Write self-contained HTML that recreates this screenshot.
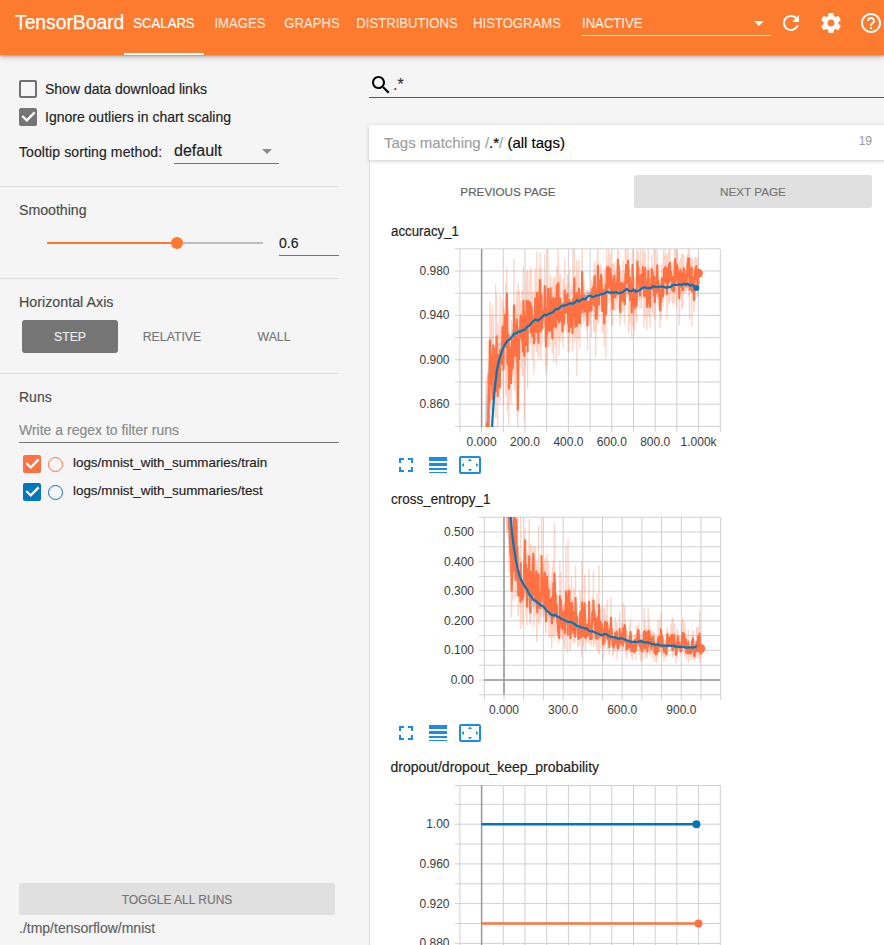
<!DOCTYPE html>
<html><head><meta charset="utf-8"><style>
html,body{margin:0;padding:0;width:884px;height:945px;overflow:hidden;background:#f5f5f5;}
body{position:relative;font-family:"Liberation Sans",sans-serif;}
.t{position:absolute;white-space:nowrap;line-height:1;-webkit-text-stroke:0.15px currentColor;}
.r{position:absolute;}
</style></head><body>
<div class="r" style="left:0px;top:0px;width:884px;height:945px;background:#f5f5f5;"></div>
<div class="r" style="left:369px;top:160px;width:531px;height:800px;background:#fff;border-left:1px solid #dedede;box-sizing:border-box;"></div>
<div class="r" style="left:369px;top:125px;width:531px;height:35px;background:#fff;box-shadow:0 1px 4px rgba(0,0,0,0.22);"></div>
<div class="r" style="left:0px;top:0px;width:884px;height:55px;background:#fd7b2e;box-shadow:0 1px 2px rgba(0,0,0,0.25), 0 2px 6px rgba(0,0,0,0.22);z-index:5;"></div>
<div style="position:absolute;left:0;top:0;width:884px;height:55px;z-index:6"><div class="t" style="left:15px;top:12.15px;font-size:20.5px;color:#fff;-webkit-text-stroke:0.25px #fff;transform:scaleX(0.94);transform-origin:0 0;">TensorBoard</div><div class="t" style="left:-36px;width:400px;text-align:center;top:15.58px;font-size:14.2px;color:#fff;-webkit-text-stroke:0.2px currentColor;transform:scaleX(0.925);transform-origin:50% 0;">SCALARS</div><div class="t" style="left:39.5px;width:400px;text-align:center;top:15.58px;font-size:14.2px;color:rgba(255,255,255,0.78);-webkit-text-stroke:0.2px currentColor;transform:scaleX(0.925);transform-origin:50% 0;">IMAGES</div><div class="t" style="left:112px;width:400px;text-align:center;top:15.58px;font-size:14.2px;color:rgba(255,255,255,0.78);-webkit-text-stroke:0.2px currentColor;transform:scaleX(0.925);transform-origin:50% 0;">GRAPHS</div><div class="t" style="left:206.5px;width:400px;text-align:center;top:15.58px;font-size:14.2px;color:rgba(255,255,255,0.78);-webkit-text-stroke:0.2px currentColor;transform:scaleX(0.925);transform-origin:50% 0;">DISTRIBUTIONS</div><div class="t" style="left:317px;width:400px;text-align:center;top:15.58px;font-size:14.2px;color:rgba(255,255,255,0.78);-webkit-text-stroke:0.2px currentColor;transform:scaleX(0.925);transform-origin:50% 0;">HISTOGRAMS</div><div class="r" style="left:124px;top:53px;width:80px;height:2px;background:#fff;"></div><div class="t" style="left:582px;top:15.58px;font-size:14.2px;color:rgba(255,255,255,0.85);-webkit-text-stroke:0.2px currentColor;transform:scaleX(0.925);transform-origin:0 0;">INACTIVE</div><div class="r" style="left:582px;top:35px;width:189px;height:1px;background:rgba(255,255,255,0.85);"></div><div class="r" style="left:754px;top:21px;width:0;height:0;border-left:5px solid transparent;border-right:5px solid transparent;border-top:5px solid #fff;"></div><svg style="position:absolute;left:779px;top:11px" width="24" height="24" viewBox="0 0 24 24"><path d="M17.65 6.35C16.2 4.9 14.21 4 12 4c-4.42 0-7.99 3.58-7.99 8s3.57 8 7.99 8c3.73 0 6.84-2.55 7.73-6h-2.08c-.82 2.33-3.04 4-5.65 4-3.31 0-6-2.69-6-6s2.69-6 6-6c1.66 0 3.14.69 4.22 1.78L13 11h7V4l-2.35 2.35z" fill="#fff"/></svg><svg style="position:absolute;left:819px;top:11px" width="24" height="24" viewBox="0 0 24 24"><path d="M19.43 12.98c.04-.32.07-.64.07-.98s-.03-.66-.07-.98l2.11-1.65c.19-.15.24-.42.12-.64l-2-3.46c-.12-.22-.39-.3-.61-.22l-2.49 1c-.52-.4-1.08-.73-1.69-.98l-.38-2.65C14.46 2.18 14.25 2 14 2h-4c-.25 0-.46.18-.49.42l-.38 2.65c-.61.25-1.17.59-1.69.98l-2.49-1c-.23-.09-.49 0-.61.22l-2 3.46c-.13.22-.07.49.12.64l2.11 1.65c-.04.32-.07.65-.07.98s.03.66.07.98l-2.11 1.65c-.19.15-.24.42-.12.64l2 3.46c.12.22.39.3.61.22l2.49-1c.52.4 1.08.73 1.69.98l.38 2.65c.03.24.24.42.49.42h4c.25 0 .46-.18.49-.42l.38-2.65c.61-.25 1.17-.59 1.69-.98l2.49 1c.23.09.49 0 .61-.22l2-3.46c.12-.22.07-.49-.12-.64l-2.11-1.65zM12 15.5c-1.93 0-3.5-1.57-3.5-3.5s1.57-3.5 3.5-3.5 3.5 1.57 3.5 3.5-1.57 3.5-3.5 3.5z" fill="#fff"/></svg><svg style="position:absolute;left:859px;top:11px" width="24" height="24" viewBox="0 0 24 24"><path d="M11 18h2v-2h-2v2zm1-16C6.48 2 2 6.48 2 12s4.48 10 10 10 10-4.48 10-10S17.52 2 12 2zm0 18c-4.41 0-8-3.59-8-8s3.59-8 8-8 8 3.59 8 8-3.59 8-8 8zm0-14c-2.21 0-4 1.79-4 4h2c0-1.1.9-2 2-2s2 .9 2 2c0 2-3 1.75-3 5h2c0-2.25 3-2.5 3-5 0-2.21-1.79-4-4-4z" fill="#fff"/></svg></div>
<div class="r" style="left:19px;top:80px;width:18px;height:18px;box-sizing:border-box;border:2px solid #707070;border-radius:2px;"></div>
<div class="t" style="left:45px;top:82.35px;font-size:14px;color:#212121;">Show data download links</div>
<div class="r" style="left:19px;top:108px;width:18px;height:18px;background:#757575;border-radius:2px;"></div>
<svg style="position:absolute;left:19px;top:108px" width="18" height="18"><polyline points="3.2,8 7.8,12.4 15.7,4.4" fill="none" stroke="#fff" stroke-width="2.3"/></svg>
<div class="t" style="left:45px;top:110.35px;font-size:14px;color:#212121;">Ignore outliers in chart scaling</div>
<div class="t" style="left:19px;top:145.15px;font-size:14px;color:#212121;letter-spacing:0.1px;">Tooltip sorting method:</div>
<div class="t" style="left:174px;top:143.26px;font-size:16px;color:#212121;">default</div>
<div class="r" style="left:174px;top:163px;width:105px;height:1px;background:#757575;"></div>
<div class="r" style="left:262px;top:149px;width:0;height:0;border-left:5px solid transparent;border-right:5px solid transparent;border-top:5px solid #8a8a8a;"></div>
<div class="r" style="left:0px;top:186px;width:339px;height:1px;background:#dcdcdc;"></div>
<div class="t" style="left:19px;top:203.15px;font-size:14px;color:#4a4a4a;transform:scaleX(1.01);transform-origin:0 0;">Smoothing</div>
<div class="r" style="left:47px;top:242px;width:130px;height:2px;background:#fd7a2c;"></div>
<div class="r" style="left:177px;top:242px;width:86px;height:2px;background:#bdbdbd;"></div>
<div class="r" style="left:171px;top:237px;width:12px;height:12px;border-radius:50%;background:#fd7a2c;"></div>
<div class="t" style="left:279px;top:235.85px;font-size:14px;color:#212121;">0.6</div>
<div class="r" style="left:279px;top:255px;width:60px;height:1px;background:#757575;"></div>
<div class="r" style="left:0px;top:278px;width:339px;height:1px;background:#dcdcdc;"></div>
<div class="t" style="left:19px;top:295.25px;font-size:14px;color:#4a4a4a;transform:scaleX(1.02);transform-origin:0 0;">Horizontal Axis</div>
<div class="r" style="left:22px;top:320px;width:96px;height:33px;background:#757575;border-radius:3px;"></div>
<div class="t" style="left:-130px;width:400px;text-align:center;top:330.79px;font-size:12.3px;color:#eeeeee;">STEP</div>
<div class="t" style="left:-28px;width:400px;text-align:center;top:330.79px;font-size:12.3px;color:#757575;">RELATIVE</div>
<div class="t" style="left:74px;width:400px;text-align:center;top:330.79px;font-size:12.3px;color:#757575;">WALL</div>
<div class="r" style="left:0px;top:373px;width:339px;height:1px;background:#dcdcdc;"></div>
<div class="t" style="left:19px;top:389.95px;font-size:14px;color:#4a4a4a;">Runs</div>
<div class="t" style="left:19px;top:423.15px;font-size:14px;color:#8a8a8a;">Write a regex to filter runs</div>
<div class="r" style="left:19px;top:442px;width:320px;height:1px;background:#757575;"></div>
<div class="r" style="left:23px;top:455px;width:18px;height:18px;background:#ff7043;border-radius:2px;"></div>
<svg style="position:absolute;left:23px;top:455px" width="18" height="18"><polyline points="3.2,8 7.8,12.4 15.7,4.4" fill="none" stroke="#fff" stroke-width="2.3"/></svg>
<div class="r" style="left:48px;top:456.5px;width:15px;height:15px;box-sizing:border-box;border:1.8px solid #ff7043;border-radius:50%;"></div>
<div class="t" style="left:73px;top:455.86px;font-size:13.4px;color:#212121;">logs/mnist_with_summaries/train</div>
<div class="r" style="left:23px;top:483px;width:18px;height:18px;background:#0277bd;border-radius:2px;"></div>
<svg style="position:absolute;left:23px;top:483px" width="18" height="18"><polyline points="3.2,8 7.8,12.4 15.7,4.4" fill="none" stroke="#fff" stroke-width="2.3"/></svg>
<div class="r" style="left:48px;top:484.5px;width:15px;height:15px;box-sizing:border-box;border:1.8px solid #0277bd;border-radius:50%;"></div>
<div class="t" style="left:73px;top:483.86px;font-size:13.4px;color:#212121;">logs/mnist_with_summaries/test</div>
<div class="r" style="left:19px;top:883px;width:316px;height:32px;background:#e0e0e0;border-radius:3px;"></div>
<div class="t" style="left:-23px;width:400px;text-align:center;top:894.34px;font-size:12px;color:#757575;">TOGGLE ALL RUNS</div>
<div class="t" style="left:19px;top:921.15px;font-size:14px;color:#616161;">./tmp/tensorflow/mnist</div>
<svg style="position:absolute;left:369px;top:73px" width="24" height="24" viewBox="0 0 24 24"><path d="M15.5 14h-.79l-.28-.27C15.41 12.59 16 11.11 16 9.5 16 5.91 13.09 3 9.5 3S3 5.91 3 9.5 5.91 16 9.5 16c1.61 0 3.09-.59 4.23-1.57l.27.28v.79l5 4.99L20.49 19l-4.99-5zm-6 0C7.01 14 5 11.99 5 9.5S7.01 5 9.5 5 14 7.01 14 9.5 11.99 14 9.5 14z" fill="#000"/></svg>
<div class="t" style="left:393px;top:76.96px;font-size:16px;color:#333;">.*</div>
<div class="r" style="left:369px;top:97px;width:515px;height:1px;background:#555;"></div>
<div class="t" style="left:384px;top:135.40px;font-size:15px;color:#000;"><span style="color:#9e9e9e">Tags matching /</span>.*<span style="color:#9e9e9e">/</span> (all tags)</div>
<div class="t" style="left:472px;width:400px;text-align:right;top:135.24px;font-size:12px;color:#9e9e9e;">19</div>
<div class="r" style="left:634px;top:175px;width:238px;height:33px;background:#e0e0e0;border-radius:3px;"></div>
<div class="t" style="left:308px;width:400px;text-align:center;top:186.40px;font-size:11.7px;color:#616161;">PREVIOUS PAGE</div>
<div class="t" style="left:553px;width:400px;text-align:center;top:186.40px;font-size:11.7px;color:#757575;">NEXT PAGE</div>
<div class="t" style="left:390.5px;top:224.15px;font-size:14px;color:#212121;transform:scaleX(0.95);transform-origin:0 0;">accuracy_1</div>
<div class="t" style="left:390.5px;top:491.95px;font-size:14px;color:#212121;transform:scaleX(0.962);transform-origin:0 0;">cross_entropy_1</div>
<div class="t" style="left:390.5px;top:759.95px;font-size:14px;color:#212121;">dropout/dropout_keep_probability</div>
<svg style="position:absolute;left:394px;top:453px" width="24" height="24" viewBox="0 0 24 24"><path d="M7 14H5v5h5v-2H7v-3zm-2-4h2V7h3V5H5v5zm12 7h-3v2h5v-5h-2v3zM14 5v2h3v3h2V5h-5z" fill="#1e8be6"/></svg>
<svg style="position:absolute;left:426px;top:453px" width="24" height="24" viewBox="0 0 24 24"><path d="M3 17h18v-2H3v2zm0 3h18v-1H3v1zm0-7h18v-3H3v3zm0-9v4h18V4H3z" fill="#1e8be6"/></svg>
<svg style="position:absolute;left:458px;top:453px" width="24" height="24" viewBox="0 0 24 24"><path d="M12.01 5.5L10 8h4l-1.99-2.5zM18 10v4l2.5-1.99L18 10zM6 10l-2.5 2.01L6 14v-4zm8 6h-4l2.01 2.5L14 16zm7-13H3c-1.1 0-2 .9-2 2v14c0 1.1.9 2 2 2h18c1.1 0 2-.9 2-2V5c0-1.1-.9-2-2-2zm0 16.01H3V4.99h18v14.02z" fill="#1e8be6"/></svg>
<svg style="position:absolute;left:394px;top:721px" width="24" height="24" viewBox="0 0 24 24"><path d="M7 14H5v5h5v-2H7v-3zm-2-4h2V7h3V5H5v5zm12 7h-3v2h5v-5h-2v3zM14 5v2h3v3h2V5h-5z" fill="#1e8be6"/></svg>
<svg style="position:absolute;left:426px;top:721px" width="24" height="24" viewBox="0 0 24 24"><path d="M3 17h18v-2H3v2zm0 3h18v-1H3v1zm0-7h18v-3H3v3zm0-9v4h18V4H3z" fill="#1e8be6"/></svg>
<svg style="position:absolute;left:458px;top:721px" width="24" height="24" viewBox="0 0 24 24"><path d="M12.01 5.5L10 8h4l-1.99-2.5zM18 10v4l2.5-1.99L18 10zM6 10l-2.5 2.01L6 14v-4zm8 6h-4l2.01 2.5L14 16zm7-13H3c-1.1 0-2 .9-2 2v14c0 1.1.9 2 2 2h18c1.1 0 2-.9 2-2V5c0-1.1-.9-2-2-2zm0 16.01H3V4.99h18v14.02z" fill="#1e8be6"/></svg>
<svg style="position:absolute;left:0;top:0" width="884" height="945" font-family="Liberation Sans" font-size="12" fill="#3a3a3a"><line x1="455" y1="248.8" x2="720" y2="248.8" stroke="#d0d0d0" stroke-width="1"/>
<line x1="455" y1="271.0" x2="720" y2="271.0" stroke="#d0d0d0" stroke-width="1"/>
<line x1="455" y1="293.2" x2="720" y2="293.2" stroke="#d0d0d0" stroke-width="1"/>
<line x1="455" y1="315.4" x2="720" y2="315.4" stroke="#d0d0d0" stroke-width="1"/>
<line x1="455" y1="337.6" x2="720" y2="337.6" stroke="#d0d0d0" stroke-width="1"/>
<line x1="455" y1="359.8" x2="720" y2="359.8" stroke="#d0d0d0" stroke-width="1"/>
<line x1="455" y1="382.0" x2="720" y2="382.0" stroke="#d0d0d0" stroke-width="1"/>
<line x1="455" y1="404.2" x2="720" y2="404.2" stroke="#d0d0d0" stroke-width="1"/>
<line x1="455" y1="426.4" x2="720" y2="426.4" stroke="#d0d0d0" stroke-width="1"/>
<line x1="459.9" y1="249" x2="459.9" y2="432" stroke="#d0d0d0" stroke-width="1"/>
<line x1="481.6" y1="249" x2="481.6" y2="432" stroke="#d0d0d0" stroke-width="1"/>
<line x1="503.3" y1="249" x2="503.3" y2="432" stroke="#d0d0d0" stroke-width="1"/>
<line x1="525.0" y1="249" x2="525.0" y2="432" stroke="#d0d0d0" stroke-width="1"/>
<line x1="546.7" y1="249" x2="546.7" y2="432" stroke="#d0d0d0" stroke-width="1"/>
<line x1="568.4" y1="249" x2="568.4" y2="432" stroke="#d0d0d0" stroke-width="1"/>
<line x1="590.1" y1="249" x2="590.1" y2="432" stroke="#d0d0d0" stroke-width="1"/>
<line x1="611.8" y1="249" x2="611.8" y2="432" stroke="#d0d0d0" stroke-width="1"/>
<line x1="633.5" y1="249" x2="633.5" y2="432" stroke="#d0d0d0" stroke-width="1"/>
<line x1="655.2" y1="249" x2="655.2" y2="432" stroke="#d0d0d0" stroke-width="1"/>
<line x1="676.9" y1="249" x2="676.9" y2="432" stroke="#d0d0d0" stroke-width="1"/>
<line x1="698.6" y1="249" x2="698.6" y2="432" stroke="#d0d0d0" stroke-width="1"/>
<line x1="720.3" y1="249" x2="720.3" y2="432" stroke="#d0d0d0" stroke-width="1"/>
<line x1="481.6" y1="249" x2="481.6" y2="427" stroke="#999999" stroke-width="1.5"/>
<clipPath id="cp1"><rect x="460" y="249" width="260" height="178"/></clipPath>
<g clip-path="url(#cp1)">
<path d="M481.8,1362.1 L482.0,1277.7 L482.3,1112.6 L482.5,868.3 L482.7,1003.5 L482.9,915.7 L483.1,788.5 L483.3,710.8 L483.6,713.0 L484.0,635.2 L484.2,538.7 L484.4,524.4 L484.6,604.4 L484.9,519.2 L485.1,493.2 L485.3,544.1 L485.5,449.2 L485.7,502.9 L486.2,377.3 L486.4,413.1 L486.6,411.6 L486.8,441.6 L487.0,410.7 L487.2,503.0 L487.5,453.1 L487.7,373.0 L487.9,494.5 L488.3,340.9 L488.5,465.2 L488.8,341.5 L489.0,416.8 L489.2,337.5 L489.4,367.0 L489.6,444.4 L489.8,312.0 L490.1,302.2 L490.5,370.8 L490.7,379.6 L490.9,373.6 L491.1,410.3 L491.4,314.6 L491.6,389.1 L491.8,366.1 L492.0,399.3 L492.2,391.2 L492.7,419.5 L492.9,304.9 L493.1,368.0 L493.3,317.4 L493.5,359.8 L493.8,391.0 L494.0,374.2 L494.2,384.2 L494.4,358.6 L494.8,374.9 L495.1,371.3 L495.3,418.5 L495.5,392.9 L495.7,284.5 L495.9,386.2 L496.1,402.7 L496.4,341.5 L496.6,294.6 L497.0,418.6 L497.2,364.2 L497.4,382.2 L497.7,430.7 L497.9,322.6 L498.1,355.0 L498.3,350.7 L498.5,385.8 L498.7,333.7 L499.2,375.7 L499.4,358.5 L499.6,399.4 L499.8,403.6 L500.0,295.0 L500.3,372.9 L500.5,338.8 L500.7,352.3 L500.9,369.2 L501.3,371.5 L501.6,323.4 L501.8,362.3 L502.0,355.7 L502.2,348.2 L502.4,299.8 L502.6,320.3 L502.9,332.5 L503.1,371.5 L503.5,404.8 L503.7,308.2 L504.0,307.3 L504.2,352.7 L504.4,324.4 L504.6,314.3 L504.8,312.1 L505.0,308.2 L505.3,364.3 L505.7,283.5 L505.9,395.7 L506.1,309.8 L506.3,324.5 L506.6,308.9 L506.8,268.1 L507.0,283.9 L507.2,389.7 L507.4,411.3 L507.9,310.2 L508.1,383.3 L508.3,343.0 L508.5,308.7 L508.7,407.5 L508.9,425.8 L509.2,331.3 L509.4,339.6 L509.6,350.9 L510.0,339.2 L510.2,374.4 L510.5,399.8 L510.7,346.6 L510.9,377.9 L511.1,404.0 L511.3,319.6 L511.5,341.6 L511.8,323.1 L512.2,377.0 L512.4,363.9 L512.6,376.8 L512.8,372.2 L513.1,330.1 L513.3,367.7 L513.5,323.5 L513.7,324.0 L513.9,259.0 L514.4,389.8 L514.6,302.2 L514.8,339.4 L515.0,336.3 L515.2,390.9 L515.5,352.9 L515.7,306.9 L515.9,338.1 L516.1,331.7 L516.5,345.4 L516.8,290.6 L517.0,334.8 L517.2,416.6 L517.4,359.6 L517.6,407.3 L517.8,455.0 L518.1,352.8 L518.3,283.0 L518.7,330.7 L518.9,375.9 L519.1,367.0 L519.4,289.9 L519.6,325.8 L519.8,329.7 L520.0,333.3 L520.2,329.7 L520.4,301.3 L520.9,310.3 L521.1,322.4 L521.3,368.4 L521.5,311.3 L521.7,354.8 L522.0,289.7 L522.2,375.7 L522.4,334.3 L522.6,329.3 L523.0,376.7 L523.3,266.3 L523.5,275.6 L523.7,344.9 L523.9,300.2 L524.1,314.2 L524.3,421.5 L524.6,318.5 L524.8,329.5 L525.2,324.0 L525.4,365.2 L525.7,336.2 L525.9,332.8 L526.1,284.0 L526.3,314.2 L526.5,326.1 L526.7,271.6 L527.0,345.2 L527.4,339.0 L527.6,389.0 L527.8,269.7 L528.0,290.9 L528.3,292.4 L528.5,301.0 L528.7,320.4 L528.9,316.6 L529.1,332.7 L529.6,330.7 L529.8,321.5 L530.0,270.8 L530.2,303.9 L530.4,325.0 L530.6,342.8 L530.9,344.5 L531.1,267.2 L531.3,304.9 L531.7,319.7 L531.9,333.7 L532.2,359.7 L532.4,323.8 L532.6,291.5 L532.8,334.6 L533.0,328.8 L533.2,328.4 L533.5,317.0 L533.9,374.5 L534.1,328.3 L534.3,349.0 L534.5,290.1 L534.8,345.8 L535.0,300.3 L535.2,268.3 L535.4,329.9 L535.6,339.4 L536.1,312.6 L536.3,318.9 L536.5,351.9 L536.7,303.2 L536.9,251.2 L537.2,326.8 L537.4,324.8 L537.6,352.6 L537.8,307.2 L538.2,358.8 L538.5,353.9 L538.7,275.0 L538.9,346.9 L539.1,281.4 L539.3,266.7 L539.5,308.2 L539.8,298.4 L540.0,252.5 L540.4,322.6 L540.6,335.3 L540.8,360.0 L541.1,314.4 L541.3,267.5 L541.5,284.3 L541.7,345.9 L541.9,342.9 L542.1,331.4 L542.6,305.4 L542.8,321.3 L543.0,307.6 L543.2,304.8 L543.4,323.9 L543.7,315.4 L543.9,307.4 L544.1,316.6 L544.3,297.6 L544.7,253.8 L545.0,294.5 L545.2,311.5 L545.4,366.7 L545.6,300.7 L545.8,374.6 L546.0,357.4 L546.3,285.6 L546.5,290.1 L546.9,317.0 L547.1,366.0 L547.4,323.7 L547.6,333.2 L547.8,291.7 L548.0,248.8 L548.2,304.7 L548.4,335.7 L548.7,347.8 L549.1,312.8 L549.3,316.4 L549.5,346.6 L549.7,307.0 L550.0,346.3 L550.2,275.9 L550.4,277.4 L550.6,276.6 L550.8,324.7 L551.3,294.0 L551.5,313.8 L551.7,321.6 L551.9,319.9 L552.1,349.3 L552.3,353.5 L552.6,284.8 L552.8,314.9 L553.0,302.3 L553.4,278.1 L553.6,361.4 L553.9,332.3 L554.1,303.0 L554.3,296.3 L554.5,319.6 L554.7,276.8 L554.9,301.5 L555.2,344.5 L555.6,335.7 L555.8,283.2 L556.0,293.4 L556.2,364.4 L556.5,266.7 L556.7,289.1 L556.9,266.7 L557.1,318.3 L557.3,315.6 L557.8,340.2 L558.0,248.8 L558.2,311.5 L558.4,259.0 L558.6,325.4 L558.9,301.1 L559.1,355.5 L559.3,317.2 L559.5,276.6 L559.9,342.5 L560.2,273.7 L560.4,295.4 L560.6,336.0 L560.8,319.9 L561.0,318.5 L561.2,306.4 L561.5,320.5 L561.7,329.0 L562.1,313.4 L562.3,334.4 L562.5,342.0 L562.8,305.6 L563.0,278.4 L563.2,348.5 L563.4,303.8 L563.6,322.7 L563.8,332.1 L564.3,278.8 L564.5,318.4 L564.7,260.0 L564.9,325.8 L565.1,292.0 L565.4,309.6 L565.6,324.7 L565.8,286.0 L566.0,307.3 L566.4,285.3 L566.7,303.9 L566.9,333.5 L567.1,305.3 L567.3,300.8 L567.5,274.8 L567.7,327.9 L568.0,303.1 L568.2,350.9 L568.6,283.2 L568.8,332.3 L569.1,352.8 L569.3,303.1 L569.5,270.1 L569.7,344.4 L569.9,331.9 L570.1,322.1 L570.4,332.9 L570.8,290.2 L571.0,323.5 L571.2,320.9 L571.4,284.2 L571.7,321.7 L571.9,288.3 L572.1,327.5 L572.3,334.2 L572.5,351.5 L573.0,248.8 L573.2,308.8 L573.4,293.1 L573.6,300.6 L573.8,295.2 L574.0,298.2 L574.3,248.8 L574.5,328.2 L574.7,342.5 L575.1,327.2 L575.3,336.0 L575.6,278.4 L575.8,276.3 L576.0,325.4 L576.2,337.1 L576.4,308.5 L576.6,260.4 L576.9,375.9 L577.3,284.0 L577.5,327.8 L577.7,269.8 L577.9,327.6 L578.2,305.9 L578.4,339.1 L578.6,324.6 L578.8,260.1 L579.0,275.5 L579.5,308.6 L579.7,321.2 L579.9,348.8 L580.1,308.1 L580.3,298.2 L580.6,299.6 L580.8,299.7 L581.0,327.4 L581.2,298.8 L581.6,298.0 L581.9,262.1 L582.1,248.8 L582.3,300.4 L582.5,317.2 L582.7,298.3 L582.9,312.8 L583.2,316.3 L583.4,297.9 L583.8,324.1 L584.0,280.0 L584.2,298.8 L584.5,289.3 L584.7,300.8 L584.9,315.2 L585.1,321.0 L585.3,302.0 L585.5,310.2 L586.0,289.3 L586.2,295.6 L586.4,331.4 L586.6,293.5 L586.8,330.7 L587.1,311.4 L587.3,302.9 L587.5,349.7 L587.7,292.6 L588.1,290.9 L588.4,298.9 L588.6,305.9 L588.8,304.5 L589.0,320.2 L589.2,301.6 L589.4,308.9 L589.7,292.0 L589.9,325.8 L590.3,288.1 L590.5,290.4 L590.8,297.8 L591.0,305.5 L591.2,279.6 L591.4,337.1 L591.6,281.9 L591.8,287.5 L592.1,286.4 L592.5,283.7 L592.7,310.4 L592.9,300.2 L593.1,277.0 L593.4,282.2 L593.6,288.0 L593.8,332.2 L594.0,279.3 L594.2,263.0 L594.7,267.1 L594.9,286.9 L595.1,332.8 L595.3,268.7 L595.5,296.5 L595.7,357.5 L596.0,283.0 L596.2,330.7 L596.4,325.6 L596.8,308.6 L597.0,259.9 L597.3,301.7 L597.5,285.3 L597.7,248.8 L597.9,251.6 L598.1,294.7 L598.3,298.1 L598.6,323.9 L599.0,309.4 L599.2,281.0 L599.4,281.7 L599.6,288.9 L599.9,266.5 L600.1,311.1 L600.3,292.9 L600.5,273.0 L600.7,276.7 L601.2,264.4 L601.4,281.3 L601.6,299.0 L601.8,282.1 L602.0,316.2 L602.3,332.1 L602.5,276.4 L602.7,292.3 L602.9,283.2 L603.3,333.2 L603.6,299.8 L603.8,305.6 L604.0,312.2 L604.2,346.7 L604.4,298.9 L604.6,268.2 L604.9,281.0 L605.1,305.3 L605.5,290.6 L605.7,271.5 L605.9,358.5 L606.2,293.2 L606.4,276.6 L606.6,273.2 L606.8,248.8 L607.0,261.9 L607.2,282.2 L607.7,282.3 L607.9,270.4 L608.1,303.0 L608.3,290.6 L608.5,267.3 L608.8,248.8 L609.0,293.4 L609.2,290.6 L609.4,284.5 L609.8,256.4 L610.1,290.0 L610.3,253.3 L610.5,312.8 L610.7,293.7 L610.9,293.9 L611.1,269.8 L611.4,263.5 L611.6,325.7 L612.0,311.1 L612.2,280.6 L612.5,304.8 L612.7,325.7 L612.9,263.5 L613.1,276.6 L613.3,276.6 L613.5,300.0 L613.8,263.6 L614.2,294.2 L614.4,261.9 L614.6,310.3 L614.8,308.9 L615.1,283.3 L615.3,305.1 L615.5,271.9 L615.7,281.8 L615.9,310.3 L616.4,286.2 L616.6,296.4 L616.8,265.9 L617.0,303.0 L617.2,298.3 L617.4,258.7 L617.7,248.8 L617.9,248.8 L618.1,286.1 L618.5,282.3 L618.7,250.9 L619.0,290.4 L619.2,310.7 L619.4,284.6 L619.6,276.6 L619.8,307.1 L620.0,326.5 L620.3,321.4 L620.7,271.3 L620.9,305.1 L621.1,290.4 L621.3,282.0 L621.6,272.3 L621.8,294.9 L622.0,275.1 L622.2,307.9 L622.4,295.4 L622.9,311.0 L623.1,260.0 L623.3,287.3 L623.5,304.1 L623.7,294.9 L624.0,291.8 L624.2,270.0 L624.4,324.1 L624.6,310.9 L625.0,295.3 L625.3,248.8 L625.5,263.9 L625.7,288.9 L625.9,269.5 L626.1,248.8 L626.3,291.6 L626.6,294.7 L626.8,257.7 L627.2,274.5 L627.4,270.3 L627.6,297.8 L627.9,248.8 L628.1,248.8 L628.3,272.6 L628.5,269.8 L628.7,333.0 L628.9,270.9 L629.4,290.2 L629.6,275.5 L629.8,269.7 L630.0,293.5 L630.2,324.8 L630.5,277.0 L630.7,302.7 L630.9,293.1 L631.1,299.4 L631.5,293.2 L631.8,338.7 L632.0,257.1 L632.2,279.4 L632.4,259.5 L632.6,248.8 L632.8,284.6 L633.1,326.7 L633.3,305.7 L633.7,312.8 L633.9,296.5 L634.2,283.1 L634.4,331.0 L634.6,277.0 L634.8,319.5 L635.0,278.0 L635.2,287.3 L635.5,291.9 L635.9,286.3 L636.1,297.0 L636.3,298.6 L636.5,323.1 L636.8,285.2 L637.0,248.8 L637.2,248.8 L637.4,254.2 L637.6,268.3 L638.1,299.8 L638.3,251.4 L638.5,285.6 L638.7,285.8 L638.9,290.9 L639.1,282.1 L639.4,294.1 L639.6,286.1 L639.8,308.8 L640.2,292.6 L640.4,248.8 L640.7,285.6 L640.9,289.4 L641.1,271.9 L641.3,267.9 L641.5,309.1 L641.7,288.6 L642.0,263.0 L642.4,277.7 L642.6,281.0 L642.8,248.8 L643.0,299.0 L643.3,281.8 L643.5,295.4 L643.7,250.0 L643.9,327.6 L644.1,298.7 L644.6,295.4 L644.8,268.5 L645.0,269.8 L645.2,252.0 L645.4,318.8 L645.7,266.5 L645.9,289.9 L646.1,298.2 L646.3,271.2 L646.7,303.9 L647.0,329.8 L647.2,291.5 L647.4,316.7 L647.6,297.6 L647.8,274.8 L648.0,276.1 L648.3,248.8 L648.5,287.5 L648.9,317.2 L649.1,299.8 L649.3,303.4 L649.6,310.1 L649.8,273.1 L650.0,297.2 L650.2,326.9 L650.4,267.3 L650.6,285.2 L651.1,274.8 L651.3,280.3 L651.5,268.6 L651.7,281.8 L651.9,255.1 L652.2,273.1 L652.4,273.9 L652.6,273.4 L652.8,314.8 L653.2,286.1 L653.5,288.2 L653.7,277.8 L653.9,312.5 L654.1,248.8 L654.3,280.0 L654.5,309.1 L654.8,320.1 L655.0,288.5 L655.4,284.2 L655.6,298.1 L655.9,280.1 L656.1,296.3 L656.3,270.0 L656.5,298.1 L656.7,282.9 L656.9,260.5 L657.2,248.8 L657.6,304.2 L657.8,292.2 L658.0,300.4 L658.2,264.7 L658.5,307.1 L658.7,292.5 L658.9,282.5 L659.1,303.3 L659.3,302.8 L659.8,292.2 L660.0,327.8 L660.2,313.4 L660.4,290.7 L660.6,278.4 L660.8,285.7 L661.1,320.4 L661.3,291.8 L661.5,264.1 L661.9,269.4 L662.1,283.3 L662.4,300.9 L662.6,267.7 L662.8,294.1 L663.0,306.9 L663.2,298.9 L663.4,249.8 L663.7,276.6 L664.1,256.1 L664.3,291.8 L664.5,260.9 L664.7,294.4 L665.0,284.7 L665.2,248.8 L665.4,264.6 L665.6,292.1 L665.8,283.0 L666.3,274.1 L666.5,254.9 L666.7,291.7 L666.9,318.8 L667.1,287.1 L667.4,280.7 L667.6,278.7 L667.8,252.5 L668.0,274.1 L668.4,263.4 L668.7,304.7 L668.9,262.1 L669.1,248.8 L669.3,264.2 L669.5,275.4 L669.7,277.5 L670.0,248.8 L670.2,300.8 L670.6,283.2 L670.8,270.8 L671.0,264.7 L671.3,290.1 L671.5,274.1 L671.7,286.7 L671.9,278.1 L672.1,283.5 L672.3,305.2 L672.8,281.0 L673.0,261.7 L673.2,301.3 L673.4,285.7 L673.6,266.2 L673.9,303.5 L674.1,276.5 L674.3,303.2 L674.5,256.1 L674.9,248.8 L675.2,248.8 L675.4,285.1 L675.6,264.5 L675.8,277.7 L676.0,278.1 L676.2,248.8 L676.5,308.5 L676.7,257.7 L677.1,281.3 L677.3,250.1 L677.6,276.2 L677.8,294.5 L678.0,274.2 L678.2,264.4 L678.4,279.4 L678.6,269.7 L678.9,291.2 L679.3,325.5 L679.5,260.9 L679.7,265.1 L679.9,276.9 L680.2,278.5 L680.4,257.9 L680.6,289.7 L680.8,295.0 L681.0,283.9 L681.5,254.6 L681.7,309.4 L681.9,254.5 L682.1,293.4 L682.3,303.2 L682.5,253.1 L682.8,281.9 L683.0,307.4 L683.2,287.4 L683.6,260.0 L683.8,254.5 L684.1,288.8 L684.3,271.1 L684.5,264.6 L684.7,293.3 L684.9,272.1 L685.1,280.3 L685.4,291.0 L685.8,290.0 L686.0,278.2 L686.2,278.9 L686.4,291.5 L686.7,288.5 L686.9,256.0 L687.1,275.0 L687.3,260.8 L687.5,254.1 L688.0,267.0 L688.2,248.8 L688.4,296.8 L688.6,262.4 L688.8,286.1 L689.1,248.8 L689.3,248.8 L689.5,320.5 L689.7,299.7 L690.1,265.3 L690.4,262.7 L690.6,263.8 L690.8,280.8 L691.0,269.7 L691.2,265.5 L691.4,280.9 L691.7,257.6 L691.9,326.7 L692.3,265.9 L692.5,300.9 L692.7,259.0 L693.0,283.9 L693.2,297.8 L693.4,271.3 L693.6,298.2 L693.8,298.2 L694.0,311.9 L694.5,279.6 L694.7,268.6 L694.9,257.6 L695.1,282.0 L695.3,257.1 L695.6,278.6 L695.8,280.9 L696.0,267.0 L696.2,256.8 L696.6,286.0 L696.9,284.0 L697.1,282.2 L697.3,277.1 L697.5,297.7 L697.7,257.4 L697.9,287.2 L698.2,269.2 L698.4,296.0" fill="none" stroke="#ff7043" stroke-opacity="0.3" stroke-width="1.3"/>
<path d="M481.6,1494.7 L483.8,643.8 L485.9,430.3 L488.1,376.1 L490.3,359.1 L492.5,354.8 L494.6,348.8 L496.8,342.8 L499.0,345.6 L501.1,343.9 L503.3,338.8 L505.5,337.2 L507.6,336.0 L509.8,337.1 L512.0,332.8 L514.1,329.1 L516.3,333.1 L518.5,329.1 L520.7,331.5 L522.8,328.4 L525.0,328.4 L527.2,322.6 L529.3,324.1 L531.5,318.5 L533.7,317.6 L535.9,317.4 L538.0,322.6 L540.2,316.0 L542.4,313.6 L544.5,312.1 L546.7,315.6 L548.9,311.7 L551.0,312.1 L553.2,310.7 L555.4,304.6 L557.6,308.9 L559.7,306.0 L561.9,302.6 L564.1,305.9 L566.2,303.8 L568.4,302.5 L570.6,301.9 L572.7,304.8 L574.9,300.5 L577.1,296.3 L579.2,303.8 L581.4,296.5 L583.6,298.0 L585.8,299.5 L587.9,291.7 L590.1,294.6 L592.3,299.5 L594.4,295.5 L596.6,293.6 L598.8,295.3 L601.0,292.4 L603.1,294.1 L605.3,291.6 L607.5,289.1 L609.6,294.6 L611.8,291.8 L614.0,293.3 L616.1,291.3 L618.3,294.6 L620.5,292.6 L622.7,291.2 L624.8,287.9 L627.0,286.9 L629.2,293.4 L631.3,291.7 L633.5,287.4 L635.7,294.5 L637.8,290.0 L640.0,288.8 L642.2,284.8 L644.4,286.1 L646.5,288.7 L648.7,288.6 L650.9,288.1 L653.0,283.0 L655.2,288.2 L657.4,287.7 L659.5,285.7 L661.7,286.8 L663.9,286.9 L666.0,289.3 L668.2,286.0 L670.4,287.1 L672.6,282.5 L674.7,283.8 L676.9,285.5 L679.1,283.5 L681.2,286.1 L683.4,282.1 L685.6,285.0 L687.8,283.2 L689.9,288.3 L692.1,283.7 L694.3,289.2 L696.4,290.1" fill="none" stroke="#0077bb" stroke-opacity="0.2" stroke-width="2"/>
<path d="M481.8,1362.1 L482.0,1309.3 L482.3,1209.0 L482.5,1052.4 L482.7,1031.2 L482.9,982.7 L483.1,902.8 L483.3,824.7 L483.6,779.6 L484.0,721.5 L484.2,648.1 L484.4,598.5 L484.6,600.9 L484.9,568.2 L485.1,538.2 L485.3,540.6 L485.5,504.0 L485.7,503.6 L486.2,453.0 L486.4,437.0 L486.6,426.9 L486.8,432.7 L487.0,423.9 L487.2,455.6 L487.5,454.6 L487.7,422.0 L487.9,451.0 L488.3,406.9 L488.5,430.2 L488.8,394.7 L489.0,403.6 L489.2,377.1 L489.4,373.1 L489.6,401.6 L489.8,365.8 L490.1,340.3 L490.5,352.5 L490.7,363.4 L490.9,367.5 L491.1,384.6 L491.4,356.6 L491.6,369.6 L491.8,368.2 L492.0,380.7 L492.2,384.9 L492.7,398.7 L492.9,361.2 L493.1,363.9 L493.3,345.3 L493.5,351.1 L493.8,367.1 L494.0,369.9 L494.2,375.6 L494.4,368.8 L494.8,371.3 L495.1,371.3 L495.3,390.1 L495.5,391.2 L495.7,348.6 L495.9,363.6 L496.1,379.2 L496.4,364.2 L496.6,336.3 L497.0,369.2 L497.2,367.2 L497.4,373.2 L497.7,396.2 L497.9,366.8 L498.1,362.1 L498.3,357.5 L498.5,368.8 L498.7,354.8 L499.2,363.2 L499.4,361.3 L499.6,376.5 L499.8,387.4 L500.0,350.4 L500.3,359.4 L500.5,351.2 L500.7,351.6 L500.9,358.7 L501.3,363.8 L501.6,347.6 L501.8,353.5 L502.0,354.4 L502.2,351.9 L502.4,331.1 L502.6,326.7 L502.9,329.0 L503.1,346.0 L503.5,369.5 L503.7,345.0 L504.0,329.9 L504.2,339.0 L504.4,333.2 L504.6,325.6 L504.8,320.2 L505.0,315.4 L505.3,335.0 L505.7,314.4 L505.9,346.9 L506.1,332.1 L506.3,329.0 L506.6,321.0 L506.8,299.8 L507.0,293.5 L507.2,332.0 L507.4,363.7 L507.9,342.3 L508.1,358.7 L508.3,352.4 L508.5,334.9 L508.7,364.0 L508.9,388.7 L509.2,365.7 L509.4,355.3 L509.6,353.5 L510.0,347.8 L510.2,358.4 L510.5,375.0 L510.7,363.6 L510.9,369.4 L511.1,383.2 L511.3,357.8 L511.5,351.3 L511.8,340.0 L512.2,354.8 L512.4,358.4 L512.6,365.8 L512.8,368.4 L513.1,353.1 L513.3,358.9 L513.5,344.8 L513.7,336.4 L513.9,305.4 L514.4,339.2 L514.6,324.4 L514.8,330.4 L515.0,332.8 L515.2,356.0 L515.5,354.8 L515.7,335.6 L515.9,336.6 L516.1,334.7 L516.5,339.0 L516.8,319.6 L517.0,325.7 L517.2,362.0 L517.4,361.1 L517.6,379.5 L517.8,409.7 L518.1,387.0 L518.3,345.4 L518.7,339.5 L518.9,354.0 L519.1,359.2 L519.4,331.5 L519.6,329.2 L519.8,329.4 L520.0,331.0 L520.2,330.5 L520.4,318.8 L520.9,315.4 L521.1,318.2 L521.3,338.3 L521.5,327.5 L521.7,338.4 L522.0,318.9 L522.2,341.7 L522.4,338.7 L522.6,335.0 L523.0,351.7 L523.3,317.5 L523.5,300.7 L523.7,318.4 L523.9,311.1 L524.1,312.4 L524.3,356.0 L524.6,341.0 L524.8,336.4 L525.2,331.4 L525.4,344.9 L525.7,341.4 L525.9,338.0 L526.1,316.4 L526.3,315.5 L526.5,319.8 L526.7,300.5 L527.0,318.4 L527.4,326.6 L527.6,351.6 L527.8,318.9 L528.0,307.7 L528.3,301.6 L528.5,301.3 L528.7,309.0 L528.9,312.0 L529.1,320.3 L529.6,324.4 L529.8,323.3 L530.0,302.3 L530.2,302.9 L530.4,311.7 L530.6,324.2 L530.9,332.3 L531.1,306.3 L531.3,305.7 L531.7,311.3 L531.9,320.3 L532.2,336.0 L532.4,331.1 L532.6,315.3 L532.8,323.0 L533.0,325.3 L533.2,326.6 L533.5,322.8 L533.9,343.4 L534.1,337.4 L534.3,342.0 L534.5,321.3 L534.8,331.1 L535.0,318.8 L535.2,298.6 L535.4,311.1 L535.6,322.5 L536.1,318.5 L536.3,318.7 L536.5,331.9 L536.7,320.4 L536.9,292.8 L537.2,306.4 L537.4,313.8 L537.6,329.3 L537.8,320.5 L538.2,335.8 L538.5,343.0 L538.7,315.8 L538.9,328.3 L539.1,309.5 L539.3,292.4 L539.5,298.7 L539.8,298.6 L540.0,280.1 L540.4,297.1 L540.6,312.4 L540.8,331.4 L541.1,324.6 L541.3,301.8 L541.5,294.8 L541.7,315.2 L541.9,326.3 L542.1,328.3 L542.6,319.1 L542.8,320.0 L543.0,315.0 L543.2,311.0 L543.4,316.1 L543.7,315.8 L543.9,312.5 L544.1,314.1 L544.3,307.5 L544.7,286.0 L545.0,289.4 L545.2,298.2 L545.4,325.6 L545.6,315.6 L545.8,339.2 L546.0,346.5 L546.3,322.1 L546.5,309.3 L546.9,312.4 L547.1,333.8 L547.4,329.7 L547.6,331.1 L547.8,315.4 L548.0,288.7 L548.2,295.1 L548.4,311.4 L548.7,326.0 L549.1,320.7 L549.3,319.0 L549.5,330.0 L549.7,320.8 L550.0,331.0 L550.2,309.0 L550.4,296.3 L550.6,288.4 L550.8,303.0 L551.3,299.4 L551.5,305.1 L551.7,311.7 L551.9,315.0 L552.1,328.7 L552.3,338.6 L552.6,317.1 L552.8,316.2 L553.0,310.6 L553.4,297.6 L553.6,323.1 L553.9,326.8 L554.1,317.3 L554.3,308.9 L554.5,313.2 L554.7,298.6 L554.9,299.8 L555.2,317.7 L555.6,324.9 L555.8,308.2 L556.0,302.3 L556.2,327.1 L556.5,302.9 L556.7,297.4 L556.9,285.1 L557.1,298.4 L557.3,305.3 L557.8,319.2 L558.0,291.1 L558.2,299.3 L558.4,283.1 L558.6,300.0 L558.9,300.5 L559.1,322.5 L559.3,320.4 L559.5,302.8 L559.9,318.7 L560.2,300.7 L560.4,298.6 L560.6,313.5 L560.8,316.1 L561.0,317.0 L561.2,312.8 L561.5,315.9 L561.7,321.1 L562.1,318.0 L562.3,324.6 L562.5,331.5 L562.8,321.2 L563.0,304.1 L563.2,321.9 L563.4,314.6 L563.6,317.9 L563.8,323.6 L564.3,305.7 L564.5,310.8 L564.7,290.5 L564.9,304.6 L565.1,299.6 L565.4,303.6 L565.6,312.0 L565.8,301.6 L566.0,303.9 L566.4,296.4 L566.7,299.4 L566.9,313.1 L567.1,309.9 L567.3,306.3 L567.5,293.7 L567.7,307.4 L568.0,305.7 L568.2,323.8 L568.6,307.5 L568.8,317.5 L569.1,331.6 L569.3,320.2 L569.5,300.1 L569.7,317.8 L569.9,323.5 L570.1,322.9 L570.4,326.9 L570.8,312.2 L571.0,316.7 L571.2,318.4 L571.4,304.7 L571.7,311.5 L571.9,302.2 L572.1,312.4 L572.3,321.1 L572.5,333.2 L573.0,299.5 L573.2,303.2 L573.4,299.1 L573.6,299.7 L573.8,297.9 L574.0,298.1 L574.3,278.4 L574.5,298.3 L574.7,316.0 L575.1,320.4 L575.3,326.7 L575.6,307.4 L575.8,295.0 L576.0,307.1 L576.2,319.1 L576.4,314.8 L576.6,293.1 L576.9,326.2 L577.3,309.3 L577.5,316.7 L577.7,297.9 L577.9,309.8 L578.2,308.3 L578.4,320.6 L578.6,322.2 L578.8,297.4 L579.0,288.6 L579.5,296.6 L579.7,306.4 L579.9,323.4 L580.1,317.3 L580.3,309.6 L580.6,305.6 L580.8,303.3 L581.0,312.9 L581.2,307.3 L581.6,303.6 L581.9,287.0 L582.1,271.7 L582.3,283.2 L582.5,296.8 L582.7,297.4 L582.9,303.5 L583.2,308.6 L583.4,304.4 L583.8,312.2 L584.0,299.3 L584.2,299.1 L584.5,295.2 L584.7,297.4 L584.9,304.6 L585.1,311.1 L585.3,307.5 L585.5,308.6 L586.0,300.9 L586.2,298.8 L586.4,311.8 L586.6,304.5 L586.8,315.0 L587.1,313.6 L587.3,309.3 L587.5,325.5 L587.7,312.3 L588.1,303.7 L588.4,301.8 L588.6,303.4 L588.8,303.8 L589.0,310.4 L589.2,306.9 L589.4,307.7 L589.7,301.4 L589.9,311.2 L590.3,301.9 L590.5,297.3 L590.8,297.5 L591.0,300.7 L591.2,292.3 L591.4,310.2 L591.6,298.9 L591.8,294.3 L592.1,291.1 L592.5,288.2 L592.7,297.1 L592.9,298.3 L593.1,289.8 L593.4,286.8 L593.6,287.2 L593.8,305.2 L594.0,294.9 L594.2,282.1 L594.7,276.1 L594.9,280.4 L595.1,301.4 L595.3,288.3 L595.5,291.6 L595.7,318.0 L596.0,304.0 L596.2,314.7 L596.4,319.1 L596.8,314.9 L597.0,292.9 L597.3,296.4 L597.5,292.0 L597.7,274.7 L597.9,265.5 L598.1,277.2 L598.3,285.6 L598.6,300.9 L599.0,304.3 L599.2,295.0 L599.4,289.7 L599.6,289.4 L599.9,280.2 L600.1,292.6 L600.3,292.7 L600.5,284.8 L600.7,281.6 L601.2,274.7 L601.4,277.3 L601.6,286.0 L601.8,284.4 L602.0,297.1 L602.3,311.1 L602.5,297.3 L602.7,295.3 L602.9,290.4 L603.3,307.5 L603.6,304.5 L603.8,304.9 L604.0,307.8 L604.2,323.4 L604.4,313.6 L604.6,295.4 L604.9,289.6 L605.1,295.9 L605.5,293.8 L605.7,284.9 L605.9,314.3 L606.2,305.9 L606.4,294.2 L606.6,285.8 L606.8,271.0 L607.0,267.4 L607.2,273.3 L607.7,276.9 L607.9,274.3 L608.1,285.7 L608.3,287.7 L608.5,279.5 L608.8,267.2 L609.0,277.7 L609.2,282.9 L609.4,283.5 L609.8,272.7 L610.1,279.6 L610.3,269.1 L610.5,286.6 L610.7,289.4 L610.9,291.2 L611.1,282.7 L611.4,275.0 L611.6,295.3 L612.0,301.6 L612.2,293.2 L612.5,297.8 L612.7,309.0 L612.9,290.8 L613.1,285.1 L613.3,281.7 L613.5,289.0 L613.8,278.9 L614.2,285.0 L614.4,275.7 L614.6,289.6 L614.8,297.3 L615.1,291.7 L615.3,297.1 L615.5,287.0 L615.7,284.9 L615.9,295.1 L616.4,291.5 L616.6,293.5 L616.8,282.4 L617.0,290.7 L617.2,293.7 L617.4,279.7 L617.7,267.4 L617.9,259.9 L618.1,270.4 L618.5,275.2 L618.7,265.5 L619.0,275.4 L619.2,289.6 L619.4,287.6 L619.6,283.2 L619.8,292.7 L620.0,306.2 L620.3,312.3 L620.7,295.9 L620.9,299.6 L621.1,295.9 L621.3,290.3 L621.6,283.1 L621.8,287.8 L622.0,282.7 L622.2,292.8 L622.4,293.9 L622.9,300.7 L623.1,284.4 L623.3,285.6 L623.5,293.0 L623.7,293.8 L624.0,293.0 L624.2,283.8 L624.4,299.9 L624.6,304.3 L625.0,300.7 L625.3,279.9 L625.5,273.5 L625.7,279.7 L625.9,275.6 L626.1,264.9 L626.3,275.6 L626.6,283.2 L626.8,273.0 L627.2,273.6 L627.4,272.3 L627.6,282.5 L627.9,269.0 L628.1,260.9 L628.3,265.6 L628.5,267.3 L628.7,293.6 L628.9,284.5 L629.4,286.8 L629.6,282.3 L629.8,277.3 L630.0,283.8 L630.2,300.2 L630.5,290.9 L630.7,295.6 L630.9,294.6 L631.1,296.5 L631.5,295.2 L631.8,312.6 L632.0,290.4 L632.2,286.0 L632.4,275.4 L632.6,264.8 L632.8,272.7 L633.1,294.3 L633.3,298.8 L633.7,304.4 L633.9,301.3 L634.2,294.0 L634.4,308.8 L634.6,296.1 L634.8,305.5 L635.0,294.5 L635.2,291.6 L635.5,291.7 L635.9,289.6 L636.1,292.5 L636.3,295.0 L636.5,306.2 L636.8,297.8 L637.0,278.2 L637.2,266.5 L637.4,261.6 L637.6,264.3 L638.1,278.5 L638.3,267.7 L638.5,274.8 L638.7,279.2 L638.9,283.9 L639.1,283.2 L639.4,287.5 L639.6,286.9 L639.8,295.7 L640.2,294.4 L640.4,276.2 L640.7,279.9 L640.9,283.7 L641.1,279.0 L641.3,274.5 L641.5,288.4 L641.7,288.4 L642.0,278.3 L642.4,278.0 L642.6,279.2 L642.8,267.0 L643.0,279.8 L643.3,280.6 L643.5,286.5 L643.7,271.9 L643.9,294.2 L644.1,296.0 L644.6,295.7 L644.8,284.9 L645.0,278.8 L645.2,268.1 L645.4,288.4 L645.7,279.6 L645.9,283.7 L646.1,289.5 L646.3,282.2 L646.7,290.9 L647.0,306.4 L647.2,300.4 L647.4,306.9 L647.6,303.2 L647.8,291.8 L648.0,285.5 L648.3,270.8 L648.5,277.5 L648.9,293.4 L649.1,296.0 L649.3,298.9 L649.6,303.4 L649.8,291.3 L650.0,293.7 L650.2,306.9 L650.4,291.1 L650.6,288.7 L651.1,283.1 L651.3,282.0 L651.5,276.7 L651.7,278.7 L651.9,269.3 L652.2,270.8 L652.4,272.0 L652.6,272.6 L652.8,289.5 L653.2,288.1 L653.5,288.2 L653.7,284.0 L653.9,295.4 L654.1,276.8 L654.3,278.1 L654.5,290.5 L654.8,302.3 L655.0,296.8 L655.4,291.8 L655.6,294.3 L655.9,288.6 L656.1,291.7 L656.3,283.0 L656.5,289.0 L656.7,286.6 L656.9,276.2 L657.2,265.2 L657.6,280.8 L657.8,285.3 L658.0,291.4 L658.2,280.7 L658.5,291.3 L658.7,291.8 L658.9,288.1 L659.1,294.2 L659.3,297.6 L659.8,295.5 L660.0,308.4 L660.2,310.4 L660.4,302.5 L660.6,292.9 L660.8,290.0 L661.1,302.2 L661.3,298.0 L661.5,284.5 L661.9,278.4 L662.1,280.4 L662.4,288.6 L662.6,280.2 L662.8,285.8 L663.0,294.2 L663.2,296.1 L663.4,277.6 L663.7,277.2 L664.1,268.8 L664.3,278.0 L664.5,271.1 L664.7,280.4 L665.0,282.1 L665.2,268.8 L665.4,267.1 L665.6,277.1 L665.8,279.5 L666.3,277.3 L666.5,268.3 L666.7,277.7 L666.9,294.1 L667.1,291.3 L667.4,287.1 L667.6,283.7 L667.8,271.2 L668.0,272.4 L668.4,268.8 L668.7,283.2 L668.9,274.8 L669.1,264.4 L669.3,264.3 L669.5,268.7 L669.7,272.2 L670.0,262.9 L670.2,278.0 L670.6,280.1 L670.8,276.4 L671.0,271.7 L671.3,279.1 L671.5,277.1 L671.7,280.9 L671.9,279.8 L672.1,281.2 L672.3,290.8 L672.8,286.9 L673.0,276.8 L673.2,286.6 L673.4,286.3 L673.6,278.2 L673.9,288.3 L674.1,283.6 L674.3,291.4 L674.5,277.3 L674.9,265.9 L675.2,259.1 L675.4,269.5 L675.6,267.5 L675.8,271.6 L676.0,274.2 L676.2,264.0 L676.5,281.8 L676.7,272.2 L677.1,275.8 L677.3,265.5 L677.6,269.8 L677.8,279.7 L678.0,277.5 L678.2,272.3 L678.4,275.1 L678.6,272.9 L678.9,280.3 L679.3,298.4 L679.5,283.4 L679.7,276.1 L679.9,276.4 L680.2,277.2 L680.4,269.5 L680.6,277.6 L680.8,284.5 L681.0,284.3 L681.5,272.4 L681.7,287.2 L681.9,274.1 L682.1,281.9 L682.3,290.4 L682.5,275.5 L682.8,278.0 L683.0,289.8 L683.2,288.8 L683.6,277.3 L683.8,268.2 L684.1,276.4 L684.3,274.3 L684.5,270.4 L684.7,279.6 L684.9,276.6 L685.1,278.1 L685.4,283.2 L685.8,285.9 L686.0,282.8 L686.2,281.3 L686.4,285.4 L686.7,286.6 L686.9,274.4 L687.1,274.6 L687.3,269.1 L687.5,263.1 L688.0,264.7 L688.2,258.3 L688.4,273.7 L688.6,269.2 L688.8,275.9 L689.1,265.1 L689.3,258.6 L689.5,283.3 L689.7,289.9 L690.1,280.1 L690.4,273.1 L690.6,269.4 L690.8,273.9 L691.0,272.2 L691.2,269.5 L691.4,274.1 L691.7,267.5 L691.9,291.2 L692.3,281.0 L692.5,289.0 L692.7,277.0 L693.0,279.8 L693.2,287.0 L693.4,280.7 L693.6,287.7 L693.8,291.9 L694.0,299.9 L694.5,291.8 L694.7,282.5 L694.9,272.5 L695.1,276.3 L695.3,268.6 L695.6,272.6 L695.8,275.9 L696.0,272.3 L696.2,266.1 L696.6,274.1 L696.9,278.1 L697.1,279.7 L697.3,278.7 L697.5,286.3 L697.7,274.7 L697.9,279.7 L698.2,275.5 L698.4,283.7" fill="none" stroke="#ff7043" stroke-width="2.1" stroke-linejoin="round"/>
<path d="M481.6,1494.7 L483.8,962.9 L485.9,691.2 L488.1,546.4 L490.3,465.1 L492.5,418.9 L494.6,390.0 L496.8,370.8 L499.0,360.6 L501.1,353.9 L503.3,347.8 L505.5,343.6 L507.6,340.6 L509.8,339.2 L512.0,336.6 L514.1,333.6 L516.3,333.4 L518.5,331.7 L520.7,331.6 L522.8,330.3 L525.0,329.6 L527.2,326.8 L529.3,325.7 L531.5,322.8 L533.7,320.8 L535.9,319.4 L538.0,320.7 L540.2,318.8 L542.4,316.7 L544.5,314.9 L546.7,315.1 L548.9,313.8 L551.0,313.1 L553.2,312.1 L555.4,309.1 L557.6,309.1 L559.7,307.8 L561.9,305.7 L564.1,305.8 L566.2,305.0 L568.4,304.0 L570.6,303.2 L572.7,303.8 L574.9,302.5 L577.1,300.0 L579.2,301.5 L581.4,299.5 L583.6,298.9 L585.8,299.1 L587.9,296.2 L590.1,295.5 L592.3,297.1 L594.4,296.5 L596.6,295.3 L598.8,295.3 L601.0,294.2 L603.1,294.1 L605.3,293.1 L607.5,291.5 L609.6,292.7 L611.8,292.4 L614.0,292.7 L616.1,292.1 L618.3,293.1 L620.5,292.9 L622.7,292.2 L624.8,290.5 L627.0,289.0 L629.2,290.8 L631.3,291.2 L633.5,289.7 L635.7,291.6 L637.8,291.0 L640.0,290.1 L642.2,288.0 L644.4,287.2 L646.5,287.8 L648.7,288.1 L650.9,288.1 L653.0,286.1 L655.2,286.9 L657.4,287.2 L659.5,286.6 L661.7,286.7 L663.9,286.8 L666.0,287.8 L668.2,287.1 L670.4,287.1 L672.6,285.2 L674.7,284.6 L676.9,285.0 L679.1,284.4 L681.2,285.1 L683.4,283.9 L685.6,284.3 L687.8,283.9 L689.9,285.6 L692.1,284.8 L694.3,286.6 L696.4,288.0" fill="none" stroke="#0077bb" stroke-width="2.2" stroke-linejoin="round"/>
</g>
<circle cx="696.4" cy="288.0" r="3" fill="#0077bb"/>
<circle cx="698.4" cy="273.2" r="4.5" fill="#ff7043"/>
<text x="449.5" y="275.0" text-anchor="end">0.980</text>
<text x="449.5" y="319.4" text-anchor="end">0.940</text>
<text x="449.5" y="363.8" text-anchor="end">0.900</text>
<text x="449.5" y="408.2" text-anchor="end">0.860</text>
<text x="481.6" y="445.6" text-anchor="middle">0.000</text>
<text x="525.0" y="445.6" text-anchor="middle">200.0</text>
<text x="568.4" y="445.6" text-anchor="middle">400.0</text>
<text x="611.8" y="445.6" text-anchor="middle">600.0</text>
<text x="655.2" y="445.6" text-anchor="middle">800.0</text>
<text x="698.6" y="445.6" text-anchor="middle">1.000k</text>
<line x1="479" y1="517.2" x2="720" y2="517.2" stroke="#d0d0d0" stroke-width="1"/>
<line x1="479" y1="532.0" x2="720" y2="532.0" stroke="#d0d0d0" stroke-width="1"/>
<line x1="479" y1="546.8" x2="720" y2="546.8" stroke="#d0d0d0" stroke-width="1"/>
<line x1="479" y1="561.6" x2="720" y2="561.6" stroke="#d0d0d0" stroke-width="1"/>
<line x1="479" y1="576.4" x2="720" y2="576.4" stroke="#d0d0d0" stroke-width="1"/>
<line x1="479" y1="591.2" x2="720" y2="591.2" stroke="#d0d0d0" stroke-width="1"/>
<line x1="479" y1="606.0" x2="720" y2="606.0" stroke="#d0d0d0" stroke-width="1"/>
<line x1="479" y1="620.8" x2="720" y2="620.8" stroke="#d0d0d0" stroke-width="1"/>
<line x1="479" y1="635.6" x2="720" y2="635.6" stroke="#d0d0d0" stroke-width="1"/>
<line x1="479" y1="650.4" x2="720" y2="650.4" stroke="#d0d0d0" stroke-width="1"/>
<line x1="479" y1="665.2" x2="720" y2="665.2" stroke="#d0d0d0" stroke-width="1"/>
<line x1="479" y1="680.0" x2="720" y2="680.0" stroke="#d0d0d0" stroke-width="1"/>
<line x1="479" y1="694.8" x2="720" y2="694.8" stroke="#d0d0d0" stroke-width="1"/>
<line x1="484.3" y1="517" x2="484.3" y2="700" stroke="#d0d0d0" stroke-width="1"/>
<line x1="504.0" y1="517" x2="504.0" y2="700" stroke="#d0d0d0" stroke-width="1"/>
<line x1="523.7" y1="517" x2="523.7" y2="700" stroke="#d0d0d0" stroke-width="1"/>
<line x1="543.4" y1="517" x2="543.4" y2="700" stroke="#d0d0d0" stroke-width="1"/>
<line x1="563.1" y1="517" x2="563.1" y2="700" stroke="#d0d0d0" stroke-width="1"/>
<line x1="582.8" y1="517" x2="582.8" y2="700" stroke="#d0d0d0" stroke-width="1"/>
<line x1="602.5" y1="517" x2="602.5" y2="700" stroke="#d0d0d0" stroke-width="1"/>
<line x1="622.2" y1="517" x2="622.2" y2="700" stroke="#d0d0d0" stroke-width="1"/>
<line x1="641.9" y1="517" x2="641.9" y2="700" stroke="#d0d0d0" stroke-width="1"/>
<line x1="661.6" y1="517" x2="661.6" y2="700" stroke="#d0d0d0" stroke-width="1"/>
<line x1="681.3" y1="517" x2="681.3" y2="700" stroke="#d0d0d0" stroke-width="1"/>
<line x1="701.0" y1="517" x2="701.0" y2="700" stroke="#d0d0d0" stroke-width="1"/>
<line x1="720.7" y1="517" x2="720.7" y2="700" stroke="#d0d0d0" stroke-width="1"/>
<line x1="504.0" y1="517" x2="504.0" y2="695" stroke="#999999" stroke-width="1.5"/>
<line x1="484" y1="680.0" x2="720" y2="680.0" stroke="#999999" stroke-width="1.5"/>
<clipPath id="cp2"><rect x="484" y="517" width="236" height="178"/></clipPath>
<g clip-path="url(#cp2)">
<path d="M504.2,260.0 L504.4,-143.4 L504.6,238.1 L504.8,331.4 L505.0,392.2 L505.2,434.3 L505.4,418.7 L505.6,456.6 L505.8,352.4 L506.2,472.9 L506.4,483.6 L506.6,532.6 L506.8,472.2 L507.0,527.9 L507.2,493.8 L507.3,410.4 L507.5,470.3 L507.7,466.7 L508.1,487.2 L508.3,509.3 L508.5,523.0 L508.7,535.2 L508.9,478.9 L509.1,572.2 L509.3,445.8 L509.5,530.0 L509.7,565.8 L510.1,559.4 L510.3,568.2 L510.5,534.9 L510.7,572.5 L510.9,484.9 L511.1,577.1 L511.3,617.4 L511.5,577.5 L511.7,613.1 L512.1,555.1 L512.3,502.8 L512.5,526.3 L512.7,600.1 L512.9,584.4 L513.1,462.7 L513.3,545.8 L513.5,559.7 L513.7,511.6 L514.0,417.8 L514.2,501.0 L514.4,557.8 L514.6,549.6 L514.8,538.7 L515.0,585.7 L515.2,598.8 L515.4,564.0 L515.6,596.5 L516.0,569.7 L516.2,564.3 L516.4,441.4 L516.6,595.6 L516.8,573.5 L517.0,575.3 L517.2,553.3 L517.4,526.2 L517.6,586.9 L518.0,596.9 L518.2,616.5 L518.4,600.2 L518.6,552.4 L518.8,571.5 L519.0,603.2 L519.2,585.8 L519.4,573.0 L519.6,555.8 L520.0,593.4 L520.2,583.5 L520.4,622.0 L520.5,608.3 L520.7,505.4 L520.9,629.0 L521.1,587.6 L521.3,569.8 L521.5,589.2 L521.9,601.5 L522.1,580.5 L522.3,579.0 L522.5,581.7 L522.7,625.0 L522.9,584.3 L523.1,604.0 L523.3,596.4 L523.5,573.0 L523.9,558.5 L524.1,548.5 L524.3,596.2 L524.5,548.1 L524.7,537.5 L524.9,539.6 L525.1,528.1 L525.3,587.5 L525.5,588.6 L525.9,554.7 L526.1,618.1 L526.3,577.7 L526.5,599.6 L526.7,595.5 L526.9,625.7 L527.0,608.9 L527.2,586.3 L527.4,555.0 L527.8,551.6 L528.0,589.1 L528.2,592.4 L528.4,608.9 L528.6,574.8 L528.8,594.7 L529.0,568.3 L529.2,519.3 L529.4,589.4 L529.8,623.6 L530.0,611.0 L530.2,623.1 L530.4,618.4 L530.6,543.4 L530.8,583.4 L531.0,624.8 L531.2,569.9 L531.4,546.8 L531.8,600.9 L532.0,608.7 L532.2,600.8 L532.4,583.7 L532.6,572.4 L532.8,552.5 L533.0,551.6 L533.2,553.0 L533.4,546.0 L533.7,573.4 L533.9,627.0 L534.1,597.5 L534.3,585.3 L534.5,604.3 L534.7,566.0 L534.9,604.1 L535.1,616.8 L535.3,546.1 L535.7,575.9 L535.9,589.9 L536.1,567.5 L536.3,562.9 L536.5,587.1 L536.7,641.9 L536.9,613.0 L537.1,608.4 L537.3,619.6 L537.7,592.5 L537.9,560.5 L538.1,609.9 L538.3,623.1 L538.5,525.4 L538.7,609.7 L538.9,625.2 L539.1,593.0 L539.3,587.9 L539.7,615.9 L539.9,577.3 L540.1,611.6 L540.2,620.6 L540.4,596.0 L540.6,579.0 L540.8,615.4 L541.0,592.5 L541.2,603.7 L541.6,489.1 L541.8,617.6 L542.0,559.5 L542.2,603.6 L542.4,605.6 L542.6,582.9 L542.8,577.8 L543.0,565.3 L543.2,594.9 L543.6,616.8 L543.8,615.7 L544.0,590.7 L544.2,588.9 L544.4,562.4 L544.6,593.9 L544.8,574.8 L545.0,558.8 L545.2,601.0 L545.6,633.3 L545.8,628.6 L546.0,632.8 L546.2,557.7 L546.4,623.4 L546.6,571.3 L546.7,591.5 L546.9,554.1 L547.1,579.6 L547.5,609.4 L547.7,611.7 L547.9,605.4 L548.1,603.5 L548.3,618.8 L548.5,608.6 L548.7,560.7 L548.9,637.9 L549.1,602.3 L549.5,626.4 L549.7,604.6 L549.9,587.6 L550.1,610.4 L550.3,589.9 L550.5,637.2 L550.7,580.4 L550.9,621.9 L551.1,594.8 L551.5,606.1 L551.7,649.0 L551.9,625.2 L552.1,605.7 L552.3,567.5 L552.5,604.5 L552.7,605.4 L552.9,635.9 L553.1,572.7 L553.4,559.8 L553.6,611.3 L553.8,616.6 L554.0,639.1 L554.2,590.8 L554.4,522.7 L554.6,595.7 L554.8,580.2 L555.0,600.5 L555.4,630.9 L555.6,578.7 L555.8,634.8 L556.0,617.8 L556.2,607.7 L556.4,592.9 L556.6,604.9 L556.8,605.7 L557.0,628.2 L557.4,636.2 L557.6,613.4 L557.8,627.8 L558.0,636.7 L558.2,636.3 L558.4,624.4 L558.6,643.7 L558.8,637.6 L559.0,641.3 L559.4,612.1 L559.6,607.3 L559.8,560.6 L559.9,640.0 L560.1,628.5 L560.3,595.6 L560.5,620.8 L560.7,622.9 L560.9,572.5 L561.3,623.4 L561.5,636.2 L561.7,638.4 L561.9,610.6 L562.1,611.4 L562.3,639.4 L562.5,634.3 L562.7,606.8 L562.9,606.0 L563.3,629.5 L563.5,605.4 L563.7,606.7 L563.9,644.8 L564.1,624.5 L564.3,610.5 L564.5,629.0 L564.7,648.7 L564.9,624.4 L565.3,603.6 L565.5,581.4 L565.7,649.5 L565.9,544.7 L566.1,637.7 L566.3,599.4 L566.4,592.3 L566.6,599.0 L566.8,617.6 L567.2,638.6 L567.4,608.1 L567.6,632.6 L567.8,653.0 L568.0,538.4 L568.2,606.8 L568.4,576.9 L568.6,635.8 L568.8,587.9 L569.2,584.7 L569.4,585.9 L569.6,622.3 L569.8,640.1 L570.0,625.3 L570.2,650.8 L570.4,646.0 L570.6,620.8 L570.8,637.8 L571.2,625.6 L571.4,624.8 L571.6,576.4 L571.8,595.0 L572.0,624.0 L572.2,597.6 L572.4,635.5 L572.6,629.1 L572.8,605.3 L573.1,641.7 L573.3,628.5 L573.5,642.8 L573.7,622.0 L573.9,587.5 L574.1,635.8 L574.3,620.4 L574.5,637.9 L574.7,641.1 L575.1,642.3 L575.3,593.6 L575.5,565.8 L575.7,616.2 L575.9,636.0 L576.1,611.9 L576.3,630.7 L576.5,610.1 L576.7,620.4 L577.1,620.8 L577.3,614.6 L577.5,634.7 L577.7,632.3 L577.9,648.3 L578.1,633.0 L578.3,645.3 L578.5,628.7 L578.7,640.1 L579.1,624.9 L579.3,618.7 L579.5,645.6 L579.6,638.6 L579.8,640.3 L580.0,613.3 L580.2,590.5 L580.4,611.3 L580.6,632.7 L581.0,597.5 L581.2,647.1 L581.4,596.8 L581.6,637.3 L581.8,657.8 L582.0,562.0 L582.2,595.4 L582.4,642.2 L582.6,625.3 L583.0,631.6 L583.2,626.7 L583.4,647.3 L583.6,638.3 L583.8,620.6 L584.0,625.0 L584.2,605.9 L584.4,627.6 L584.6,574.7 L585.0,639.1 L585.2,624.9 L585.4,651.8 L585.6,645.5 L585.8,603.8 L586.0,642.2 L586.1,620.6 L586.3,630.6 L586.5,643.5 L586.9,634.9 L587.1,637.2 L587.3,636.9 L587.5,617.1 L587.7,619.1 L587.9,638.3 L588.1,642.4 L588.3,625.9 L588.5,631.9 L588.9,612.2 L589.1,568.5 L589.3,616.2 L589.5,631.3 L589.7,633.4 L589.9,642.3 L590.1,642.9 L590.3,644.1 L590.5,636.7 L590.9,637.3 L591.1,618.9 L591.3,637.0 L591.5,634.4 L591.7,646.7 L591.9,599.9 L592.1,623.6 L592.3,596.5 L592.5,618.5 L592.8,604.2 L593.0,635.6 L593.2,620.3 L593.4,570.4 L593.6,647.2 L593.8,611.6 L594.0,599.9 L594.2,625.9 L594.4,620.0 L594.8,609.9 L595.0,641.5 L595.2,626.3 L595.4,644.1 L595.6,641.9 L595.8,641.2 L596.0,635.1 L596.2,630.9 L596.4,626.0 L596.8,650.0 L597.0,593.2 L597.2,613.1 L597.4,621.6 L597.6,638.5 L597.8,634.9 L598.0,625.0 L598.2,627.4 L598.4,652.7 L598.8,621.9 L599.0,565.1 L599.2,654.2 L599.3,617.3 L599.5,628.5 L599.7,635.8 L599.9,609.7 L600.1,648.5 L600.3,632.0 L600.7,608.0 L600.9,637.3 L601.1,640.2 L601.3,633.0 L601.5,640.6 L601.7,606.5 L601.9,646.0 L602.1,620.7 L602.3,649.6 L602.7,624.6 L602.9,636.6 L603.1,660.1 L603.3,635.3 L603.5,648.0 L603.7,641.2 L603.9,607.7 L604.1,648.7 L604.3,648.1 L604.7,610.3 L604.9,634.1 L605.1,608.2 L605.3,631.1 L605.5,646.5 L605.7,636.8 L605.8,615.2 L606.0,620.9 L606.2,636.1 L606.6,635.5 L606.8,637.7 L607.0,643.5 L607.2,599.9 L607.4,636.3 L607.6,649.5 L607.8,642.5 L608.0,625.4 L608.2,626.9 L608.6,638.5 L608.8,644.9 L609.0,636.5 L609.2,654.5 L609.4,651.3 L609.6,624.7 L609.8,643.0 L610.0,631.7 L610.2,617.1 L610.6,627.5 L610.8,637.0 L611.0,596.8 L611.2,627.4 L611.4,641.9 L611.6,626.5 L611.8,631.7 L612.0,647.5 L612.2,636.6 L612.5,639.8 L612.7,657.2 L612.9,640.0 L613.1,641.4 L613.3,643.3 L613.5,654.9 L613.7,642.4 L613.9,638.5 L614.1,636.7 L614.5,650.7 L614.7,629.0 L614.9,651.5 L615.1,641.1 L615.3,617.3 L615.5,646.5 L615.7,644.6 L615.9,621.9 L616.1,643.2 L616.5,642.3 L616.7,635.7 L616.9,622.6 L617.1,659.3 L617.3,648.2 L617.5,650.0 L617.7,650.7 L617.9,648.5 L618.1,648.4 L618.5,635.0 L618.7,649.0 L618.9,637.5 L619.0,633.7 L619.2,647.5 L619.4,637.6 L619.6,612.2 L619.8,635.0 L620.0,646.7 L620.4,640.3 L620.6,649.6 L620.8,636.0 L621.0,627.2 L621.2,648.7 L621.4,642.2 L621.6,623.1 L621.8,645.5 L622.0,637.4 L622.4,650.8 L622.6,648.9 L622.8,645.9 L623.0,602.5 L623.2,644.7 L623.4,646.0 L623.6,646.4 L623.8,642.1 L624.0,631.4 L624.4,637.9 L624.6,605.8 L624.8,637.7 L625.0,618.5 L625.2,637.0 L625.4,632.5 L625.5,654.5 L625.7,642.0 L625.9,641.4 L626.3,643.5 L626.5,659.6 L626.7,628.7 L626.9,645.1 L627.1,645.7 L627.3,643.8 L627.5,643.5 L627.7,635.8 L627.9,653.5 L628.3,650.6 L628.5,637.5 L628.7,639.4 L628.9,645.3 L629.1,647.4 L629.3,649.9 L629.5,641.9 L629.7,624.6 L629.9,652.0 L630.3,618.7 L630.5,630.2 L630.7,646.4 L630.9,631.2 L631.1,655.4 L631.3,657.3 L631.5,654.0 L631.7,646.1 L631.9,645.3 L632.2,647.3 L632.4,640.6 L632.6,660.0 L632.8,635.7 L633.0,655.2 L633.2,648.8 L633.4,646.4 L633.6,653.2 L633.8,654.9 L634.2,652.1 L634.4,642.3 L634.6,634.7 L634.8,635.1 L635.0,652.1 L635.2,650.3 L635.4,651.5 L635.6,636.8 L635.8,659.7 L636.2,625.3 L636.4,647.6 L636.6,650.4 L636.8,638.4 L637.0,628.8 L637.2,638.5 L637.4,628.6 L637.6,641.1 L637.8,625.8 L638.2,625.6 L638.4,643.9 L638.6,622.5 L638.7,640.9 L638.9,641.9 L639.1,651.9 L639.3,646.0 L639.5,633.1 L639.7,655.1 L640.1,635.0 L640.3,639.0 L640.5,639.9 L640.7,661.1 L640.9,644.3 L641.1,635.2 L641.3,650.8 L641.5,642.2 L641.7,662.1 L642.1,635.1 L642.3,650.0 L642.5,632.3 L642.7,659.1 L642.9,634.9 L643.1,646.0 L643.3,633.4 L643.5,652.5 L643.7,649.8 L644.1,608.3 L644.3,651.7 L644.5,650.7 L644.7,646.6 L644.9,653.4 L645.1,628.1 L645.2,619.0 L645.4,650.8 L645.6,658.6 L646.0,628.6 L646.2,629.6 L646.4,633.8 L646.6,628.9 L646.8,652.3 L647.0,645.8 L647.2,656.4 L647.4,656.6 L647.6,631.7 L648.0,650.8 L648.2,608.7 L648.4,643.4 L648.6,650.6 L648.8,634.6 L649.0,618.5 L649.2,638.7 L649.4,655.4 L649.6,640.2 L650.0,626.1 L650.2,649.4 L650.4,651.9 L650.6,631.8 L650.8,643.0 L651.0,654.6 L651.2,648.5 L651.4,651.9 L651.6,641.4 L651.9,643.5 L652.1,630.1 L652.3,636.3 L652.5,658.1 L652.7,640.2 L652.9,633.9 L653.1,639.7 L653.3,632.1 L653.5,650.3 L653.9,653.7 L654.1,633.6 L654.3,654.7 L654.5,661.8 L654.7,632.4 L654.9,652.0 L655.1,648.2 L655.3,657.2 L655.5,656.7 L655.9,655.5 L656.1,648.8 L656.3,641.2 L656.5,662.7 L656.7,636.5 L656.9,655.7 L657.1,654.9 L657.3,637.5 L657.5,646.2 L657.9,658.3 L658.1,619.7 L658.3,653.4 L658.4,642.8 L658.6,643.4 L658.8,627.3 L659.0,650.0 L659.2,633.4 L659.4,652.5 L659.8,631.8 L660.0,652.8 L660.2,649.3 L660.4,619.3 L660.6,642.3 L660.8,644.6 L661.0,612.7 L661.2,641.9 L661.4,653.3 L661.8,637.4 L662.0,656.2 L662.2,632.1 L662.4,631.0 L662.6,651.4 L662.8,651.9 L663.0,644.2 L663.2,645.9 L663.4,654.8 L663.8,639.8 L664.0,661.7 L664.2,650.3 L664.4,650.1 L664.6,648.9 L664.8,643.0 L664.9,656.7 L665.1,639.7 L665.3,648.1 L665.7,652.3 L665.9,657.7 L666.1,656.5 L666.3,642.5 L666.5,654.9 L666.7,645.8 L666.9,633.8 L667.1,634.2 L667.3,626.4 L667.7,649.4 L667.9,655.9 L668.1,634.5 L668.3,643.3 L668.5,633.1 L668.7,646.5 L668.9,632.2 L669.1,637.0 L669.3,638.7 L669.7,641.3 L669.9,642.5 L670.1,644.4 L670.3,644.5 L670.5,635.3 L670.7,651.6 L670.9,624.1 L671.1,647.9 L671.3,635.4 L671.6,647.8 L671.8,649.3 L672.0,619.0 L672.2,649.9 L672.4,657.6 L672.6,653.4 L672.8,650.1 L673.0,616.9 L673.2,645.0 L673.6,636.4 L673.8,655.7 L674.0,643.5 L674.2,639.8 L674.4,623.5 L674.6,653.4 L674.8,640.7 L675.0,644.1 L675.2,656.0 L675.6,647.5 L675.8,649.8 L676.0,663.8 L676.2,640.9 L676.4,641.6 L676.6,651.5 L676.8,658.2 L677.0,629.1 L677.2,644.8 L677.6,635.8 L677.8,630.3 L678.0,652.3 L678.1,638.6 L678.3,649.8 L678.5,648.2 L678.7,648.4 L678.9,647.6 L679.1,634.7 L679.5,646.5 L679.7,649.2 L679.9,650.3 L680.1,644.2 L680.3,655.4 L680.5,652.3 L680.7,648.3 L680.9,652.9 L681.1,648.9 L681.5,653.3 L681.7,621.2 L681.9,632.1 L682.1,643.2 L682.3,648.4 L682.5,617.9 L682.7,644.7 L682.9,648.8 L683.1,644.9 L683.5,644.9 L683.7,631.1 L683.9,648.2 L684.1,619.9 L684.3,655.5 L684.5,640.7 L684.6,656.4 L684.8,624.9 L685.0,651.2 L685.4,648.7 L685.6,638.0 L685.8,633.6 L686.0,657.3 L686.2,651.4 L686.4,659.2 L686.6,646.9 L686.8,649.3 L687.0,651.5 L687.4,654.2 L687.6,651.8 L687.8,654.7 L688.0,642.9 L688.2,630.1 L688.4,662.4 L688.6,649.5 L688.8,652.2 L689.0,643.4 L689.4,656.4 L689.6,649.9 L689.8,657.0 L690.0,641.2 L690.2,647.6 L690.4,650.1 L690.6,644.9 L690.8,650.9 L691.0,660.4 L691.3,642.5 L691.5,645.8 L691.7,650.1 L691.9,637.9 L692.1,634.8 L692.3,657.5 L692.5,655.3 L692.7,630.2 L692.9,632.1 L693.3,655.0 L693.5,658.2 L693.7,654.3 L693.9,653.2 L694.1,660.7 L694.3,648.6 L694.5,658.8 L694.7,658.4 L694.9,639.0 L695.3,654.7 L695.5,649.6 L695.7,642.5 L695.9,640.4 L696.1,652.0 L696.3,648.6 L696.5,655.8 L696.7,627.6 L696.9,642.4 L697.3,657.8 L697.5,649.1 L697.7,641.7 L697.8,644.3 L698.0,626.5 L698.2,633.4 L698.4,653.8 L698.6,650.0 L698.8,659.1 L699.2,646.8 L699.4,647.8 L699.6,610.6 L699.8,648.4 L700.0,663.6 L700.2,654.9 L700.4,648.3 L700.6,659.0 L700.8,656.4" fill="none" stroke="#ff7043" stroke-opacity="0.3" stroke-width="1.3"/>
<path d="M504.0,328.2 L506.0,463.7 L507.9,528.2 L509.9,546.0 L511.9,566.2 L513.9,569.1 L515.8,576.5 L517.8,584.8 L519.8,586.7 L521.7,586.9 L523.7,590.2 L525.7,592.4 L527.6,595.3 L529.6,601.0 L531.6,599.0 L533.5,605.4 L535.5,601.2 L537.5,605.4 L539.5,606.9 L541.4,607.4 L543.4,607.8 L545.4,612.8 L547.3,614.8 L549.3,614.7 L551.3,617.8 L553.2,617.0 L555.2,613.2 L557.2,619.4 L559.2,617.4 L561.1,622.1 L563.1,620.2 L565.1,622.3 L567.0,622.8 L569.0,622.6 L571.0,621.5 L573.0,625.0 L574.9,626.0 L576.9,628.5 L578.9,626.8 L580.8,628.9 L582.8,628.0 L584.8,630.0 L586.7,628.0 L588.7,634.1 L590.7,632.3 L592.6,631.2 L594.6,633.6 L596.6,634.7 L598.6,634.6 L600.5,636.6 L602.5,635.1 L604.5,632.4 L606.4,634.7 L608.4,638.1 L610.4,638.2 L612.4,638.1 L614.3,636.7 L616.3,639.4 L618.3,639.6 L620.2,638.1 L622.2,638.5 L624.2,640.4 L626.1,641.6 L628.1,642.4 L630.1,641.7 L632.0,643.7 L634.0,640.7 L636.0,642.6 L638.0,641.6 L639.9,640.3 L641.9,641.4 L643.9,644.2 L645.8,642.3 L647.8,642.2 L649.8,644.5 L651.8,645.0 L653.7,644.3 L655.7,646.1 L657.7,643.1 L659.6,647.3 L661.6,646.2 L663.6,645.6 L665.5,645.7 L667.5,645.5 L669.5,645.6 L671.5,646.3 L673.4,645.1 L675.4,648.5 L677.4,646.6 L679.3,647.4 L681.3,646.8 L683.3,646.8 L685.2,648.1 L687.2,648.0 L689.2,646.7 L691.1,647.3 L693.1,648.4 L695.1,645.9 L697.1,645.8 L699.0,649.6" fill="none" stroke="#0077bb" stroke-opacity="0.2" stroke-width="2"/>
<path d="M504.2,260.0 L504.4,7.9 L504.6,125.3 L504.8,220.0 L505.0,294.7 L505.2,353.3 L505.4,380.2 L505.6,411.3 L505.8,387.5 L506.2,421.8 L506.4,446.6 L506.6,481.1 L506.8,477.5 L507.0,497.7 L507.2,496.1 L507.3,461.8 L507.5,465.2 L507.7,465.8 L508.1,474.4 L508.3,488.3 L508.5,502.2 L508.7,515.4 L508.9,500.8 L509.1,529.3 L509.3,495.9 L509.5,509.5 L509.7,532.0 L510.1,543.0 L510.3,553.1 L510.5,545.8 L510.7,556.5 L510.9,527.8 L511.1,547.5 L511.3,575.5 L511.5,576.3 L511.7,591.0 L512.1,576.7 L512.3,547.1 L512.5,538.8 L512.7,563.3 L512.9,571.7 L513.1,528.1 L513.3,535.2 L513.5,545.0 L513.7,531.6 L514.0,486.1 L514.2,492.0 L514.4,518.3 L514.6,530.8 L514.8,534.0 L515.0,554.7 L515.2,572.3 L515.4,569.0 L515.6,580.0 L516.0,575.9 L516.2,571.3 L516.4,519.3 L516.6,549.8 L516.8,559.3 L517.0,565.7 L517.2,560.7 L517.4,546.9 L517.6,562.9 L518.0,576.5 L518.2,592.5 L518.4,595.6 L518.6,578.3 L518.8,575.6 L519.0,586.6 L519.2,586.3 L519.4,581.0 L519.6,570.9 L520.0,579.9 L520.2,581.3 L520.4,597.6 L520.5,601.9 L520.7,563.3 L520.9,589.6 L521.1,588.8 L521.3,581.2 L521.5,584.4 L521.9,591.3 L522.1,586.9 L522.3,583.8 L522.5,582.9 L522.7,599.8 L522.9,593.6 L523.1,597.8 L523.3,597.2 L523.5,587.5 L523.9,575.9 L524.1,564.9 L524.3,577.4 L524.5,565.7 L524.7,554.4 L524.9,548.5 L525.1,540.3 L525.3,559.2 L525.5,570.9 L525.9,564.5 L526.1,585.9 L526.3,582.7 L526.5,589.4 L526.7,591.9 L526.9,605.4 L527.0,606.8 L527.2,598.6 L527.4,581.2 L527.8,569.3 L528.0,577.2 L528.2,583.3 L528.4,593.5 L528.6,586.0 L528.8,589.5 L529.0,581.0 L529.2,556.4 L529.4,569.6 L529.8,591.2 L530.0,599.1 L530.2,608.7 L530.4,612.6 L530.6,584.9 L530.8,584.3 L531.0,600.5 L531.2,588.3 L531.4,571.7 L531.8,583.4 L532.0,593.5 L532.2,596.4 L532.4,591.3 L532.6,583.7 L532.8,571.2 L533.0,563.4 L533.2,559.2 L533.4,553.9 L533.7,561.7 L533.9,587.8 L534.1,591.7 L534.3,589.1 L534.5,595.2 L534.7,583.5 L534.9,591.8 L535.1,601.8 L535.3,579.5 L535.7,578.1 L535.9,582.8 L536.1,576.7 L536.3,571.2 L536.5,577.5 L536.7,603.3 L536.9,607.2 L537.1,607.7 L537.3,612.4 L537.7,604.5 L537.9,586.9 L538.1,596.1 L538.3,606.9 L538.5,574.3 L538.7,588.4 L538.9,603.2 L539.1,599.1 L539.3,594.6 L539.7,603.1 L539.9,592.8 L540.1,600.3 L540.2,608.4 L540.4,603.5 L540.6,593.7 L540.8,602.4 L541.0,598.4 L541.2,600.5 L541.6,556.0 L541.8,580.6 L542.0,572.2 L542.2,584.7 L542.4,593.1 L542.6,589.0 L542.8,584.5 L543.0,576.8 L543.2,584.0 L543.6,597.1 L543.8,604.6 L544.0,599.0 L544.2,595.0 L544.4,582.0 L544.6,586.7 L544.8,582.0 L545.0,572.7 L545.2,584.0 L545.6,603.7 L545.8,613.7 L546.0,621.3 L546.2,595.9 L546.4,606.9 L546.6,592.7 L546.7,592.2 L546.9,576.9 L547.1,578.0 L547.5,590.5 L547.7,599.0 L547.9,601.6 L548.1,602.3 L548.3,608.9 L548.5,608.8 L548.7,589.6 L548.9,608.9 L549.1,606.3 L549.5,614.3 L549.7,610.4 L549.9,601.3 L550.1,604.9 L550.3,598.9 L550.5,614.2 L550.7,600.7 L550.9,609.2 L551.1,603.4 L551.5,604.5 L551.7,622.3 L551.9,623.5 L552.1,616.4 L552.3,596.8 L552.5,599.9 L552.7,602.1 L552.9,615.6 L553.1,598.4 L553.4,583.0 L553.6,594.3 L553.8,603.2 L554.0,617.6 L554.2,606.9 L554.4,573.2 L554.6,582.2 L554.8,581.4 L555.0,589.0 L555.4,605.8 L555.6,595.0 L555.8,610.9 L556.0,613.7 L556.2,611.3 L556.4,603.9 L556.6,604.3 L556.8,604.8 L557.0,614.2 L557.4,623.0 L557.6,619.2 L557.8,622.6 L558.0,628.3 L558.2,631.5 L558.4,628.6 L558.6,634.7 L558.8,635.9 L559.0,638.0 L559.4,627.7 L559.6,619.5 L559.8,596.0 L559.9,613.6 L560.1,619.6 L560.3,610.0 L560.5,614.3 L560.7,617.7 L560.9,599.7 L561.3,609.2 L561.5,620.0 L561.7,627.4 L561.9,620.7 L562.1,617.0 L562.3,625.9 L562.5,629.3 L562.7,620.3 L562.9,614.5 L563.3,620.5 L563.5,614.5 L563.7,611.3 L563.9,624.7 L564.1,624.6 L564.3,619.0 L564.5,623.0 L564.7,633.3 L564.9,629.7 L565.3,619.3 L565.5,604.1 L565.7,622.3 L565.9,591.2 L566.1,609.8 L566.3,605.6 L566.4,600.3 L566.6,599.8 L566.8,606.9 L567.2,619.6 L567.4,615.0 L567.6,622.1 L567.8,634.4 L568.0,596.0 L568.2,600.3 L568.4,590.9 L568.6,608.9 L568.8,600.5 L569.2,594.2 L569.4,590.8 L569.6,603.4 L569.8,618.1 L570.0,621.0 L570.2,632.9 L570.4,638.1 L570.6,631.2 L570.8,633.8 L571.2,630.6 L571.4,628.2 L571.6,607.5 L571.8,602.5 L572.0,611.1 L572.2,605.7 L572.4,617.6 L572.6,622.2 L572.8,615.4 L573.1,625.9 L573.3,627.0 L573.5,633.3 L573.7,628.8 L573.9,612.3 L574.1,621.7 L574.3,621.2 L574.5,627.9 L574.7,633.2 L575.1,636.8 L575.3,619.5 L575.5,598.0 L575.7,605.3 L575.9,617.6 L576.1,615.3 L576.3,621.5 L576.5,616.9 L576.7,618.3 L577.1,619.3 L577.3,617.4 L577.5,624.3 L577.7,627.5 L577.9,635.8 L578.1,634.7 L578.3,639.0 L578.5,634.8 L578.7,636.9 L579.1,632.1 L579.3,626.7 L579.5,634.3 L579.6,636.0 L579.8,637.7 L580.0,628.0 L580.2,613.0 L580.4,612.3 L580.6,620.5 L581.0,611.3 L581.2,625.6 L581.4,614.1 L581.6,623.4 L581.8,637.1 L582.0,607.1 L582.2,602.4 L582.4,618.3 L582.6,621.1 L583.0,625.3 L583.2,625.9 L583.4,634.5 L583.6,636.0 L583.8,629.8 L584.0,627.9 L584.2,619.1 L584.4,622.5 L584.6,603.4 L585.0,617.7 L585.2,620.6 L585.4,633.1 L585.6,638.1 L585.8,624.4 L586.0,631.5 L586.1,627.1 L586.3,628.5 L586.5,634.5 L586.9,634.7 L587.1,635.7 L587.3,636.2 L587.5,628.5 L587.7,624.8 L587.9,630.2 L588.1,635.1 L588.3,631.4 L588.5,631.6 L588.9,623.9 L589.1,601.7 L589.3,607.5 L589.5,617.0 L589.7,623.6 L589.9,631.1 L590.1,635.8 L590.3,639.1 L590.5,638.2 L590.9,637.8 L591.1,630.2 L591.3,633.0 L591.5,633.5 L591.7,638.8 L591.9,623.2 L592.1,623.4 L592.3,612.6 L592.5,615.0 L592.8,610.7 L593.0,620.6 L593.2,620.5 L593.4,600.5 L593.6,619.2 L593.8,616.1 L594.0,609.6 L594.2,616.1 L594.4,617.7 L594.8,614.6 L595.0,625.3 L595.2,625.7 L595.4,633.1 L595.6,636.6 L595.8,638.5 L596.0,637.1 L596.2,634.6 L596.4,631.2 L596.8,638.7 L597.0,620.5 L597.2,617.5 L597.4,619.2 L597.6,626.9 L597.8,630.1 L598.0,628.0 L598.2,627.8 L598.4,637.7 L598.8,631.4 L599.0,604.9 L599.2,624.6 L599.3,621.7 L599.5,624.4 L599.7,629.0 L599.9,621.2 L600.1,632.1 L600.3,632.1 L600.7,622.4 L600.9,628.4 L601.1,633.1 L601.3,633.1 L601.5,636.1 L601.7,624.3 L601.9,633.0 L602.1,628.1 L602.3,636.7 L602.7,631.8 L602.9,633.7 L603.1,644.3 L603.3,640.7 L603.5,643.6 L603.7,642.7 L603.9,628.7 L604.1,636.7 L604.3,641.3 L604.7,628.9 L604.9,630.9 L605.1,621.8 L605.3,625.5 L605.5,633.9 L605.7,635.1 L605.8,627.1 L606.0,624.6 L606.2,629.2 L606.6,631.7 L606.8,634.1 L607.0,637.9 L607.2,622.7 L607.4,628.1 L607.6,636.7 L607.8,639.0 L608.0,633.6 L608.2,630.9 L608.6,634.0 L608.8,638.3 L609.0,637.6 L609.2,644.3 L609.4,647.1 L609.6,638.2 L609.8,640.1 L610.0,636.7 L610.2,628.9 L610.6,628.4 L610.8,631.8 L611.0,617.8 L611.2,621.6 L611.4,629.7 L611.6,628.4 L611.8,629.7 L612.0,636.9 L612.2,636.8 L612.5,638.0 L612.7,645.7 L612.9,643.4 L613.1,642.6 L613.3,642.9 L613.5,647.7 L613.7,645.6 L613.9,642.7 L614.1,640.3 L614.5,644.5 L614.7,638.3 L614.9,643.6 L615.1,642.6 L615.3,632.5 L615.5,638.1 L615.7,640.7 L615.9,633.2 L616.1,637.2 L616.5,639.2 L616.7,637.8 L616.9,631.7 L617.1,642.8 L617.3,644.9 L617.5,646.9 L617.7,648.4 L617.9,648.5 L618.1,648.5 L618.5,643.1 L618.7,645.4 L618.9,642.3 L619.0,638.9 L619.2,642.3 L619.4,640.4 L619.6,629.1 L619.8,631.5 L620.0,637.6 L620.4,638.7 L620.6,643.0 L620.8,640.2 L621.0,635.0 L621.2,640.5 L621.4,641.2 L621.6,633.9 L621.8,638.6 L622.0,638.1 L622.4,643.2 L622.6,645.5 L622.8,645.6 L623.0,628.4 L623.2,634.9 L623.4,639.4 L623.6,642.2 L623.8,642.1 L624.0,637.9 L624.4,637.9 L624.6,625.1 L624.8,630.1 L625.0,625.5 L625.2,630.1 L625.4,631.0 L625.5,640.4 L625.7,641.1 L625.9,641.2 L626.3,642.1 L626.5,649.1 L626.7,640.9 L626.9,642.6 L627.1,643.8 L627.3,643.8 L627.5,643.7 L627.7,640.5 L627.9,645.7 L628.3,647.7 L628.5,643.6 L628.7,641.9 L628.9,643.3 L629.1,644.9 L629.3,646.9 L629.5,644.9 L629.7,636.8 L629.9,642.9 L630.3,633.2 L630.5,632.0 L630.7,637.8 L630.9,635.1 L631.1,643.2 L631.3,648.8 L631.5,650.9 L631.7,649.0 L631.9,647.5 L632.2,647.4 L632.4,644.7 L632.6,650.8 L632.8,644.8 L633.0,648.9 L633.2,648.9 L633.4,647.9 L633.6,650.0 L633.8,652.0 L634.2,652.0 L634.4,648.1 L634.6,642.8 L634.8,639.7 L635.0,644.6 L635.2,646.9 L635.4,648.7 L635.6,644.0 L635.8,650.3 L636.2,640.3 L636.4,643.2 L636.6,646.1 L636.8,643.0 L637.0,637.3 L637.2,637.8 L637.4,634.1 L637.6,636.9 L637.8,632.5 L638.2,629.7 L638.4,635.4 L638.6,630.2 L638.7,634.5 L638.9,637.4 L639.1,643.2 L639.3,644.4 L639.5,639.9 L639.7,646.0 L640.1,641.6 L640.3,640.5 L640.5,640.3 L640.7,648.6 L640.9,646.9 L641.1,642.2 L641.3,645.7 L641.5,644.3 L641.7,651.4 L642.1,644.9 L642.3,646.9 L642.5,641.1 L642.7,648.3 L642.9,643.0 L643.1,644.2 L643.3,639.9 L643.5,644.9 L643.7,646.9 L644.1,631.4 L644.3,639.6 L644.5,644.0 L644.7,645.1 L644.9,648.4 L645.1,640.3 L645.2,631.7 L645.4,639.4 L645.6,647.0 L646.0,639.6 L646.2,635.6 L646.4,634.9 L646.6,632.5 L646.8,640.4 L647.0,642.6 L647.2,648.1 L647.4,651.5 L647.6,643.6 L648.0,646.5 L648.2,631.4 L648.4,636.2 L648.6,641.9 L648.8,639.0 L649.0,630.8 L649.2,634.0 L649.4,642.5 L649.6,641.6 L650.0,635.4 L650.2,641.0 L650.4,645.4 L650.6,639.9 L650.8,641.2 L651.0,646.6 L651.2,647.3 L651.4,649.1 L651.6,646.0 L651.9,645.0 L652.1,639.0 L652.3,638.0 L652.5,646.0 L652.7,643.7 L652.9,639.8 L653.1,639.7 L653.3,636.7 L653.5,642.1 L653.9,646.8 L654.1,641.5 L654.3,646.8 L654.5,652.8 L654.7,644.6 L654.9,647.6 L655.1,647.8 L655.3,651.5 L655.5,653.6 L655.9,654.3 L656.1,652.1 L656.3,647.7 L656.5,653.7 L656.7,646.8 L656.9,650.4 L657.1,652.2 L657.3,646.3 L657.5,646.3 L657.9,651.1 L658.1,638.5 L658.3,644.5 L658.4,643.8 L658.6,643.7 L658.8,637.1 L659.0,642.3 L659.2,638.7 L659.4,644.2 L659.8,639.3 L660.0,644.7 L660.2,646.5 L660.4,635.6 L660.6,638.3 L660.8,640.8 L661.0,629.6 L661.2,634.5 L661.4,642.0 L661.8,640.2 L662.0,646.6 L662.2,640.8 L662.4,636.9 L662.6,642.7 L662.8,646.4 L663.0,645.5 L663.2,645.7 L663.4,649.3 L663.8,645.5 L664.0,652.0 L664.2,651.3 L664.4,650.8 L664.6,650.0 L664.8,647.2 L664.9,651.0 L665.1,646.5 L665.3,647.1 L665.7,649.2 L665.9,652.6 L666.1,654.2 L666.3,649.5 L666.5,651.7 L666.7,649.3 L666.9,643.1 L667.1,639.6 L667.3,634.3 L667.7,640.3 L667.9,646.6 L668.1,641.7 L668.3,642.4 L668.5,638.7 L668.7,641.8 L668.9,638.0 L669.1,637.6 L669.3,638.0 L669.7,639.3 L669.9,640.6 L670.1,642.1 L670.3,643.1 L670.5,639.9 L670.7,644.6 L670.9,636.4 L671.1,641.0 L671.3,638.8 L671.6,642.4 L671.8,645.2 L672.0,634.7 L672.2,640.8 L672.4,647.5 L672.6,649.9 L672.8,650.0 L673.0,636.7 L673.2,640.0 L673.6,638.6 L673.8,645.4 L674.0,644.7 L674.2,642.7 L674.4,635.1 L674.6,642.4 L674.8,641.7 L675.0,642.7 L675.2,648.0 L675.6,647.8 L675.8,648.6 L676.0,654.7 L676.2,649.2 L676.4,646.2 L676.6,648.3 L676.8,652.3 L677.0,643.0 L677.2,643.7 L677.6,640.6 L677.8,636.5 L678.0,642.8 L678.1,641.1 L678.3,644.6 L678.5,646.0 L678.7,647.0 L678.9,647.3 L679.1,642.2 L679.5,643.9 L679.7,646.0 L679.9,647.7 L680.1,646.3 L680.3,650.0 L680.5,650.9 L680.7,649.8 L680.9,651.1 L681.1,650.2 L681.5,651.4 L681.7,639.3 L681.9,636.4 L682.1,639.2 L682.3,642.9 L682.5,632.9 L682.7,637.6 L682.9,642.1 L683.1,643.2 L683.5,643.9 L683.7,638.8 L683.9,642.6 L684.1,633.5 L684.3,642.3 L684.5,641.7 L684.6,647.6 L684.8,638.5 L685.0,643.6 L685.4,645.6 L685.6,642.6 L685.8,639.0 L686.0,646.3 L686.2,648.3 L686.4,652.7 L686.6,650.4 L686.8,649.9 L687.0,650.5 L687.4,652.0 L687.6,651.9 L687.8,653.1 L688.0,649.0 L688.2,641.5 L688.4,649.8 L688.6,649.7 L688.8,650.7 L689.0,647.8 L689.4,651.2 L689.6,650.7 L689.8,653.2 L690.0,648.4 L690.2,648.1 L690.4,648.9 L690.6,647.3 L690.8,648.7 L691.0,653.4 L691.3,649.0 L691.5,647.7 L691.7,648.7 L691.9,644.4 L692.1,640.6 L692.3,647.3 L692.5,650.5 L692.7,642.4 L692.9,638.3 L693.3,645.0 L693.5,650.2 L693.7,651.9 L693.9,652.4 L694.1,655.7 L694.3,652.9 L694.5,655.3 L694.7,656.5 L694.9,649.5 L695.3,651.6 L695.5,650.8 L695.7,647.5 L695.9,644.6 L696.1,647.6 L696.3,648.0 L696.5,651.1 L696.7,641.7 L696.9,642.0 L697.3,648.3 L697.5,648.6 L697.7,645.9 L697.8,645.3 L698.0,637.7 L698.2,636.0 L698.4,643.1 L698.6,645.9 L698.8,651.1 L699.2,649.4 L699.4,648.8 L699.6,633.5 L699.8,639.4 L700.0,649.1 L700.2,651.4 L700.4,650.2 L700.6,653.7 L700.8,654.8" fill="none" stroke="#ff7043" stroke-width="2.1" stroke-linejoin="round"/>
<path d="M504.0,328.2 L506.0,412.9 L507.9,471.7 L509.9,505.9 L511.9,532.0 L513.9,547.6 L515.8,559.5 L517.8,569.8 L519.8,576.6 L521.7,580.8 L523.7,584.6 L525.7,587.7 L527.6,590.8 L529.6,594.9 L531.6,596.5 L533.5,600.1 L535.5,600.5 L537.5,602.5 L539.5,604.3 L541.4,605.5 L543.4,606.4 L545.4,609.0 L547.3,611.3 L549.3,612.7 L551.3,614.7 L553.2,615.6 L555.2,614.7 L557.2,616.6 L559.2,616.9 L561.1,619.0 L563.1,619.5 L565.1,620.6 L567.0,621.5 L569.0,621.9 L571.0,621.8 L573.0,623.1 L574.9,624.2 L576.9,625.9 L578.9,626.3 L580.8,627.3 L582.8,627.6 L584.8,628.6 L586.7,628.3 L588.7,630.6 L590.7,631.3 L592.6,631.3 L594.6,632.2 L596.6,633.2 L598.6,633.7 L600.5,634.9 L602.5,635.0 L604.5,633.9 L606.4,634.2 L608.4,635.8 L610.4,636.8 L612.4,637.3 L614.3,637.0 L616.3,638.0 L618.3,638.6 L620.2,638.4 L622.2,638.4 L624.2,639.2 L626.1,640.1 L628.1,641.0 L630.1,641.3 L632.0,642.3 L634.0,641.6 L636.0,642.0 L638.0,641.8 L639.9,641.2 L641.9,641.3 L643.9,642.5 L645.8,642.4 L647.8,642.3 L649.8,643.2 L651.8,643.9 L653.7,644.1 L655.7,644.9 L657.7,644.2 L659.6,645.4 L661.6,645.7 L663.6,645.7 L665.5,645.7 L667.5,645.6 L669.5,645.6 L671.5,645.9 L673.4,645.5 L675.4,646.7 L677.4,646.7 L679.3,647.0 L681.3,646.9 L683.3,646.9 L685.2,647.4 L687.2,647.6 L689.2,647.3 L691.1,647.3 L693.1,647.7 L695.1,647.0 L697.1,646.5 L699.0,647.7" fill="none" stroke="#0077bb" stroke-width="2.2" stroke-linejoin="round"/>
</g>
<circle cx="699.0" cy="647.7" r="3" fill="#0077bb"/>
<circle cx="700.8" cy="648.6" r="4.5" fill="#ff7043"/>
<text x="474.0" y="536.0" text-anchor="end">0.500</text>
<text x="474.0" y="565.6" text-anchor="end">0.400</text>
<text x="474.0" y="595.2" text-anchor="end">0.300</text>
<text x="474.0" y="624.8" text-anchor="end">0.200</text>
<text x="474.0" y="654.4" text-anchor="end">0.100</text>
<text x="474.0" y="684.0" text-anchor="end">0.00</text>
<text x="504.0" y="713.7" text-anchor="middle">0.000</text>
<text x="563.1" y="713.7" text-anchor="middle">300.0</text>
<text x="622.2" y="713.7" text-anchor="middle">600.0</text>
<text x="681.3" y="713.7" text-anchor="middle">900.0</text>
<line x1="455" y1="785.5" x2="720" y2="785.5" stroke="#d0d0d0" stroke-width="1"/>
<line x1="455" y1="804.3" x2="720" y2="804.3" stroke="#d0d0d0" stroke-width="1"/>
<line x1="455" y1="824.2" x2="720" y2="824.2" stroke="#d0d0d0" stroke-width="1"/>
<line x1="455" y1="844.1" x2="720" y2="844.1" stroke="#d0d0d0" stroke-width="1"/>
<line x1="455" y1="863.9" x2="720" y2="863.9" stroke="#d0d0d0" stroke-width="1"/>
<line x1="455" y1="883.8" x2="720" y2="883.8" stroke="#d0d0d0" stroke-width="1"/>
<line x1="455" y1="903.6" x2="720" y2="903.6" stroke="#d0d0d0" stroke-width="1"/>
<line x1="455" y1="923.5" x2="720" y2="923.5" stroke="#d0d0d0" stroke-width="1"/>
<line x1="455" y1="943.4" x2="720" y2="943.4" stroke="#d0d0d0" stroke-width="1"/>
<line x1="455" y1="963.2" x2="720" y2="963.2" stroke="#d0d0d0" stroke-width="1"/>
<line x1="459.9" y1="785" x2="459.9" y2="965" stroke="#d0d0d0" stroke-width="1"/>
<line x1="481.6" y1="785" x2="481.6" y2="965" stroke="#d0d0d0" stroke-width="1"/>
<line x1="503.3" y1="785" x2="503.3" y2="965" stroke="#d0d0d0" stroke-width="1"/>
<line x1="525.0" y1="785" x2="525.0" y2="965" stroke="#d0d0d0" stroke-width="1"/>
<line x1="546.7" y1="785" x2="546.7" y2="965" stroke="#d0d0d0" stroke-width="1"/>
<line x1="568.4" y1="785" x2="568.4" y2="965" stroke="#d0d0d0" stroke-width="1"/>
<line x1="590.1" y1="785" x2="590.1" y2="965" stroke="#d0d0d0" stroke-width="1"/>
<line x1="611.8" y1="785" x2="611.8" y2="965" stroke="#d0d0d0" stroke-width="1"/>
<line x1="633.5" y1="785" x2="633.5" y2="965" stroke="#d0d0d0" stroke-width="1"/>
<line x1="655.2" y1="785" x2="655.2" y2="965" stroke="#d0d0d0" stroke-width="1"/>
<line x1="676.9" y1="785" x2="676.9" y2="965" stroke="#d0d0d0" stroke-width="1"/>
<line x1="698.6" y1="785" x2="698.6" y2="965" stroke="#d0d0d0" stroke-width="1"/>
<line x1="720.3" y1="785" x2="720.3" y2="965" stroke="#d0d0d0" stroke-width="1"/>
<line x1="481.6" y1="785" x2="481.6" y2="960" stroke="#999999" stroke-width="1.5"/>
<line x1="481.6" y1="824.2" x2="696.4" y2="824.2" stroke="#0077bb" stroke-width="2.5"/>
<line x1="481.6" y1="923.5" x2="698.4" y2="923.5" stroke="#ff7043" stroke-width="2.5"/>
<circle cx="696.4" cy="824.2" r="4" fill="#0077bb"/>
<circle cx="698.4" cy="923.5" r="4" fill="#ff7043"/>
<text x="449.5" y="828.2" text-anchor="end">1.00</text>
<text x="449.5" y="867.9" text-anchor="end">0.960</text>
<text x="449.5" y="907.6" text-anchor="end">0.920</text>
<text x="449.5" y="947.4" text-anchor="end">0.880</text></svg>
</body></html>
